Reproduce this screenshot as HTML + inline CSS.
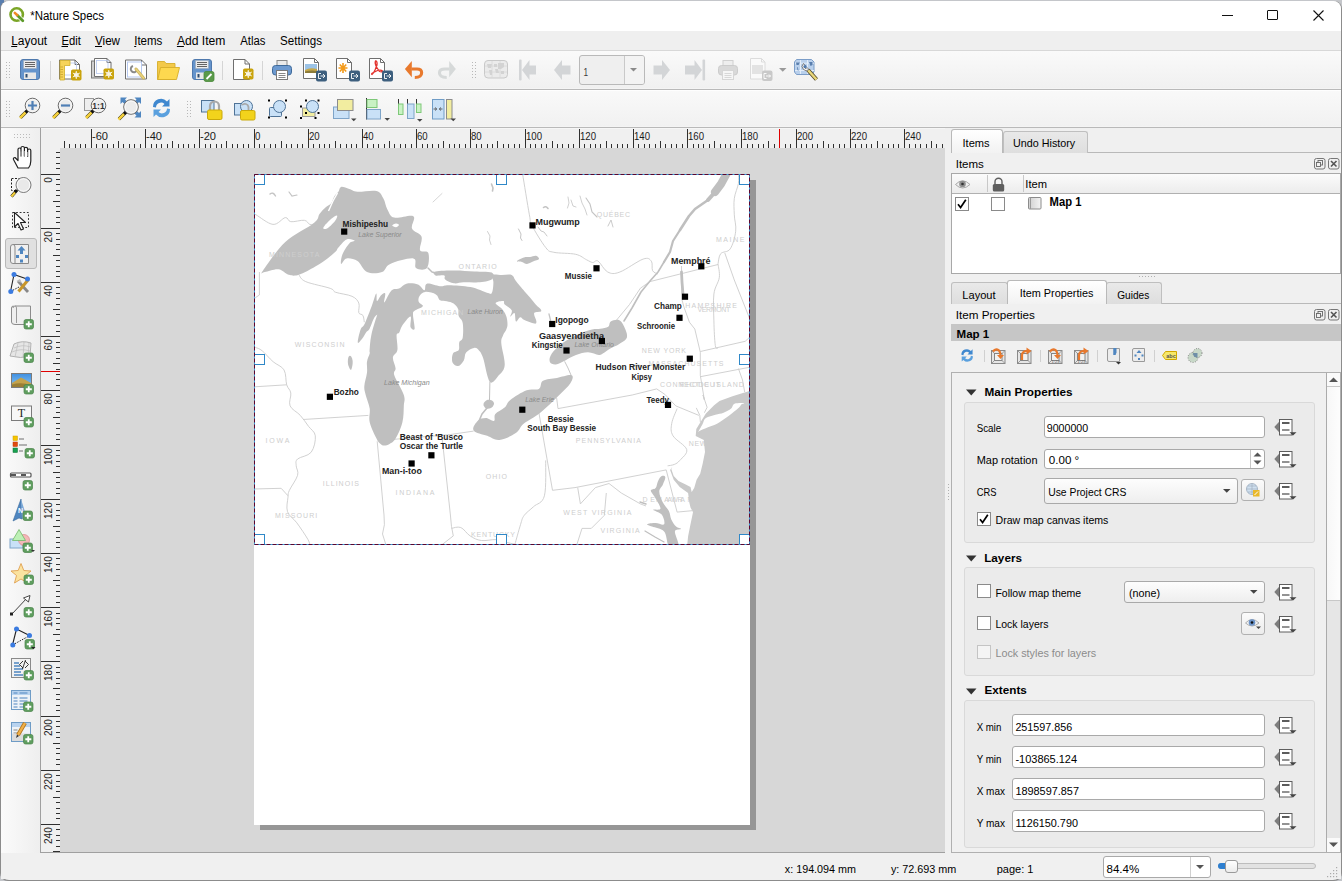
<!DOCTYPE html><html><head><meta charset='utf-8'><style>
*{box-sizing:border-box}
html,body{margin:0;padding:0}
body{width:1342px;height:881px;overflow:hidden;position:relative;font-family:"Liberation Sans",sans-serif;font-size:12px;color:#000;background:#7f8590}
.a{position:absolute}
.t{position:absolute;white-space:nowrap;line-height:1}
svg{position:absolute;overflow:visible}
u{text-decoration:underline;text-underline-offset:1px}
</style></head><body><div class="a" style="left:0px;top:0px;width:1342px;height:881px;background:#c4c6ca"></div><div class="a" style="left:0px;top:0px;width:4px;height:10px;background:#5a7fb0"></div><div class="a" style="left:0px;top:1px;width:1342px;height:880px;background:#8c8c8c;border-radius:8px"></div><div class="a" style="left:1px;top:1px;width:1340px;height:879px;background:#f0f0f0;border-radius:8px;overflow:hidden"></div><div class="a" style="left:1px;top:1px;width:1340px;height:30px;background:#fff;border-radius:8px 8px 0 0"></div><svg style="left:8px;top:6px" width="18" height="18" viewBox="0 0 18 18" ><circle cx="8.7" cy="8.5" r="6.2" fill="none" stroke="#7aa526" stroke-width="2.6"/><path d="M9.6 9.6 L14.8 14.8" stroke="#fff" stroke-width="4.2"/><path d="M9.3 9.3 L14.8 14.8" stroke="#5c9a2a" stroke-width="2.8" stroke-linecap="round"/><path d="M6.8 6.8 L9.2 9.2" stroke="#f08a24" stroke-width="2.6" stroke-linecap="round"/></svg><svg style="left:30px;top:4px" width="76" height="20"><text x="0.20" y="16.30" font-family="Liberation Sans" font-size="12" font-weight="400" fill="#000" textLength="73.8" lengthAdjust="spacingAndGlyphs" >*Nature Specs</text></svg><div class="a" style="left:1222px;top:15px;width:11px;height:1px;background:#111"></div><div class="a" style="left:1267px;top:10px;width:11px;height:10px;border:1px solid #111;border-radius:1px"></div><svg style="left:1313px;top:10px" width="11" height="11" viewBox="0 0 11 11" ><path d="M0.5 0.5 L10.5 10.5 M10.5 0.5 L0.5 10.5" stroke="#111" stroke-width="1.1"/></svg><div class="a" style="left:1px;top:31px;width:1340px;height:19px;background:#efefef"></div><div class="a" style="left:1px;top:50px;width:1340px;height:1px;background:#d8d8d8"></div><svg style="left:11px;top:29px" width="39" height="20"><text x="0.20" y="16.30" font-family="Liberation Sans" font-size="12" font-weight="400" fill="#000" textLength="36" lengthAdjust="spacingAndGlyphs" >Layout</text><rect x="0.1999999999999993" y="17" width="6" height="1" fill="#000"/></svg><svg style="left:61px;top:29px" width="22" height="20"><text x="0.50" y="16.30" font-family="Liberation Sans" font-size="12" font-weight="400" fill="#000" textLength="19.4" lengthAdjust="spacingAndGlyphs" >Edit</text><rect x="0.5" y="17" width="6.5" height="1" fill="#000"/></svg><svg style="left:95px;top:29px" width="27" height="20"><text x="0.00" y="16.30" font-family="Liberation Sans" font-size="12" font-weight="400" fill="#000" textLength="25" lengthAdjust="spacingAndGlyphs" >View</text><rect x="0" y="17" width="7" height="1" fill="#000"/></svg><svg style="left:134px;top:29px" width="31" height="20"><text x="0.20" y="16.30" font-family="Liberation Sans" font-size="12" font-weight="400" fill="#000" textLength="28.2" lengthAdjust="spacingAndGlyphs" >Items</text><rect x="0.19999999999998863" y="17" width="2" height="1" fill="#000"/></svg><svg style="left:176px;top:29px" width="52" height="20"><text x="0.90" y="16.30" font-family="Liberation Sans" font-size="12" font-weight="400" fill="#000" textLength="48.6" lengthAdjust="spacingAndGlyphs" >Add Item</text><rect x="0.9000000000000057" y="17" width="7" height="1" fill="#000"/></svg><svg style="left:240px;top:29px" width="28" height="20"><text x="0.30" y="16.30" font-family="Liberation Sans" font-size="12" font-weight="400" fill="#000" textLength="25.2" lengthAdjust="spacingAndGlyphs" >Atlas</text></svg><svg style="left:280px;top:29px" width="45" height="20"><text x="0.10" y="16.30" font-family="Liberation Sans" font-size="12" font-weight="400" fill="#000" textLength="41.9" lengthAdjust="spacingAndGlyphs" >Settings</text></svg><div class="a" style="left:1px;top:51px;width:1340px;height:38px;background:linear-gradient(#fafafa,#f0f0f0)"></div><div class="a" style="left:1px;top:88px;width:1340px;height:1px;background:#f4f4f4"></div><div class="a" style="left:1px;top:89px;width:1340px;height:1px;background:#b9b9b9"></div><div class="a" style="left:1px;top:90px;width:1340px;height:37px;background:linear-gradient(#f9f9f9,#f1f1f1)"></div><div class="a" style="left:1px;top:90px;width:1340px;height:1px;background:#fefefe"></div><div class="a" style="left:1px;top:126px;width:1340px;height:1px;background:#f4f4f4"></div><div class="a" style="left:1px;top:127px;width:1340px;height:1px;background:#b9b9b9"></div><svg style="left:6px;top:62px" width="4" height="16" viewBox="0 0 4 16" ><rect x="0" y="0" width="1" height="1" fill="#b8b8b8"/><rect x="3" y="0" width="1" height="1" fill="#b8b8b8"/><rect x="0" y="3" width="1" height="1" fill="#b8b8b8"/><rect x="3" y="3" width="1" height="1" fill="#b8b8b8"/><rect x="0" y="6" width="1" height="1" fill="#b8b8b8"/><rect x="3" y="6" width="1" height="1" fill="#b8b8b8"/><rect x="0" y="9" width="1" height="1" fill="#b8b8b8"/><rect x="3" y="9" width="1" height="1" fill="#b8b8b8"/><rect x="0" y="12" width="1" height="1" fill="#b8b8b8"/><rect x="3" y="12" width="1" height="1" fill="#b8b8b8"/><rect x="0" y="15" width="1" height="1" fill="#b8b8b8"/><rect x="3" y="15" width="1" height="1" fill="#b8b8b8"/></svg><svg style="left:472px;top:62px" width="4" height="16" viewBox="0 0 4 16" ><rect x="0" y="0" width="1" height="1" fill="#b8b8b8"/><rect x="3" y="0" width="1" height="1" fill="#b8b8b8"/><rect x="0" y="3" width="1" height="1" fill="#b8b8b8"/><rect x="3" y="3" width="1" height="1" fill="#b8b8b8"/><rect x="0" y="6" width="1" height="1" fill="#b8b8b8"/><rect x="3" y="6" width="1" height="1" fill="#b8b8b8"/><rect x="0" y="9" width="1" height="1" fill="#b8b8b8"/><rect x="3" y="9" width="1" height="1" fill="#b8b8b8"/><rect x="0" y="12" width="1" height="1" fill="#b8b8b8"/><rect x="3" y="12" width="1" height="1" fill="#b8b8b8"/><rect x="0" y="15" width="1" height="1" fill="#b8b8b8"/><rect x="3" y="15" width="1" height="1" fill="#b8b8b8"/></svg><svg style="left:6px;top:101px" width="4" height="16" viewBox="0 0 4 16" ><rect x="0" y="0" width="1" height="1" fill="#b8b8b8"/><rect x="3" y="0" width="1" height="1" fill="#b8b8b8"/><rect x="0" y="3" width="1" height="1" fill="#b8b8b8"/><rect x="3" y="3" width="1" height="1" fill="#b8b8b8"/><rect x="0" y="6" width="1" height="1" fill="#b8b8b8"/><rect x="3" y="6" width="1" height="1" fill="#b8b8b8"/><rect x="0" y="9" width="1" height="1" fill="#b8b8b8"/><rect x="3" y="9" width="1" height="1" fill="#b8b8b8"/><rect x="0" y="12" width="1" height="1" fill="#b8b8b8"/><rect x="3" y="12" width="1" height="1" fill="#b8b8b8"/><rect x="0" y="15" width="1" height="1" fill="#b8b8b8"/><rect x="3" y="15" width="1" height="1" fill="#b8b8b8"/></svg><svg style="left:187px;top:101px" width="4" height="16" viewBox="0 0 4 16" ><rect x="0" y="0" width="1" height="1" fill="#b8b8b8"/><rect x="3" y="0" width="1" height="1" fill="#b8b8b8"/><rect x="0" y="3" width="1" height="1" fill="#b8b8b8"/><rect x="3" y="3" width="1" height="1" fill="#b8b8b8"/><rect x="0" y="6" width="1" height="1" fill="#b8b8b8"/><rect x="3" y="6" width="1" height="1" fill="#b8b8b8"/><rect x="0" y="9" width="1" height="1" fill="#b8b8b8"/><rect x="3" y="9" width="1" height="1" fill="#b8b8b8"/><rect x="0" y="12" width="1" height="1" fill="#b8b8b8"/><rect x="3" y="12" width="1" height="1" fill="#b8b8b8"/><rect x="0" y="15" width="1" height="1" fill="#b8b8b8"/><rect x="3" y="15" width="1" height="1" fill="#b8b8b8"/></svg><div class="a" style="left:50px;top:61px;width:1px;height:19px;background:#d5d5d5"></div><div class="a" style="left:222px;top:61px;width:1px;height:19px;background:#d5d5d5"></div><div class="a" style="left:262px;top:61px;width:1px;height:19px;background:#d5d5d5"></div><svg style="left:20px;top:59px" width="23" height="23" viewBox="0 0 23 23" ><rect x="0.5" y="0.5" width="19" height="20" rx="2.5" fill="#6594cc" stroke="#4f79ad"/><rect x="3.5" y="1.5" width="13" height="8" fill="#ececec" stroke="#9aa9bb" stroke-width="0.6"/><path d="M5 3.5h10M5 5.5h10M5 7.5h10" stroke="#555" stroke-width="0.9"/><rect x="4" y="13.5" width="12" height="6.5" fill="#e8e8e8"/><rect x="5.5" y="15" width="2" height="3.5" fill="#2f4d70"/></svg><svg style="left:59px;top:59px" width="23" height="23" viewBox="0 0 23 23" ><path d="M0.5 1 H16.0 L20.5 5.5 V20 H0.5 Z" fill="#fff" stroke="#6f6f6f" stroke-width="1"/><path d="M16.0 1 V5.5 H20.5" fill="none" stroke="#6f6f6f" stroke-width="1"/><rect x="3.5" y="4" width="14" height="12" fill="none" stroke="#b7c9f0" stroke-width="0.8"/><path d="M1 1.5 H11 V6.5 H5.5 V21 H1 Z" fill="#f6d35a" stroke="#d0ae2a" stroke-width="0.8"/><path d="M1.5 8h2.5M1.5 10.5h2.5M1.5 13h2.5M1.5 15.5h2.5M1.5 18h2.5" stroke="#b58f1a" stroke-width="0.6"/><rect x="12" y="10.5" width="10.5" height="11" rx="1.8" fill="#c9a30c"/><g stroke="#fff" stroke-width="0.9" fill="none"><circle cx="17.25" cy="16.0" r="2"/><path d="M17.25 12.0v8M13.8 14.0l7 4M13.8 18.0l7 -4"/></g></svg><svg style="left:91px;top:58px" width="24" height="23" viewBox="0 0 24 23" ><rect x="0.5" y="3" width="16" height="17" fill="#d0d0d0" stroke="#7b7b7b"/><path d="M3.5 0.5 H16.0 L20.0 4.5 V18.5 H3.5 Z" fill="#fff" stroke="#6f6f6f" stroke-width="1"/><path d="M16.0 0.5 V4.5 H20.0" fill="none" stroke="#6f6f6f" stroke-width="1"/><rect x="5.5" y="2.5" width="11.5" height="13" fill="none" stroke="#b7c9f0" stroke-width="0.8"/><rect x="12.5" y="10.5" width="10.5" height="11" rx="1.8" fill="#c9a30c"/><g stroke="#fff" stroke-width="0.9" fill="none"><circle cx="17.75" cy="16.0" r="2"/><path d="M17.75 12.0v8M14.3 14.0l7 4M14.3 18.0l7 -4"/></g></svg><svg style="left:125px;top:59px" width="23" height="23" viewBox="0 0 23 23" ><path d="M0.5 1 H16.5 L21.5 6 V20 H0.5 Z" fill="#fff" stroke="#6f6f6f" stroke-width="1"/><path d="M16.5 1 V6 H21.5" fill="none" stroke="#6f6f6f" stroke-width="1"/><rect x="2.5" y="3" width="14" height="15" fill="none" stroke="#b7c9f0" stroke-width="1"/><path d="M8 7 a3.2 3.2 0 1 0 4 4" fill="none" stroke="#8a8a8a" stroke-width="2"/><path d="M11 10 L18.5 19" stroke="#c9b15a" stroke-width="3" stroke-linecap="round"/><path d="M11 10 L18.5 19" stroke="#e9d27a" stroke-width="1.6" stroke-linecap="round"/></svg><svg style="left:157px;top:60px" width="23" height="21" viewBox="0 0 23 21" ><path d="M0.5 19.5 V1.5 H7.5 L9 3.5 H18 V19.5 Z" fill="#f3c94a" stroke="#d6ae2a" stroke-width="0.9"/><path d="M0.8 19.5 L3.5 7.5 H22.5 L19.5 19.5 Z" fill="#fdd84f" stroke="#d6ae2a" stroke-width="0.9"/></svg><svg style="left:192px;top:59px" width="23" height="23" viewBox="0 0 23 23" ><rect x="0.5" y="0.5" width="19" height="20" rx="2.5" fill="#6594cc" stroke="#4f79ad"/><rect x="3.5" y="1.5" width="13" height="8" fill="#ececec" stroke="#9aa9bb" stroke-width="0.6"/><path d="M5 3.5h10M5 5.5h10M5 7.5h10" stroke="#555" stroke-width="0.9"/><rect x="4" y="13.5" width="12" height="6.5" fill="#e8e8e8"/><rect x="5.5" y="15" width="2" height="3.5" fill="#2f4d70"/><rect x="12" y="12.5" width="10" height="10" rx="2" fill="#5a9a4a" stroke="#4a8a3a" stroke-width="0.8"/><path d="M14.5 20 L19.5 15" stroke="#fff" stroke-width="1.8"/></svg><svg style="left:233px;top:59px" width="22" height="22" viewBox="0 0 22 22" ><path d="M0.5 0.5 H12.0 L16.5 5.0 V20.5 H0.5 Z" fill="#fff" stroke="#6f6f6f" stroke-width="1"/><path d="M12.0 0.5 V5.0 H16.5" fill="none" stroke="#6f6f6f" stroke-width="1"/><rect x="10" y="9.5" width="10.5" height="11" rx="1.8" fill="#c9a30c"/><g stroke="#fff" stroke-width="0.9" fill="none"><circle cx="15.25" cy="15.0" r="2"/><path d="M15.25 11.0v8M11.8 13.0l7 4M11.8 17.0l7 -4"/></g></svg><svg style="left:272px;top:60px" width="21" height="21" viewBox="0 0 21 21" ><rect x="5" y="0.5" width="10" height="6" fill="#eaeaea" stroke="#8a8a8a"/><rect x="0.5" y="5.5" width="19" height="9.5" rx="3" fill="#6d9ad0" stroke="#3f6a9a"/><rect x="4.5" y="10.5" width="11" height="9" fill="#fff" stroke="#7a7a7a"/><path d="M6.5 13.5h7M6.5 15.5h7M6.5 17.5h7" stroke="#6a6a6a" stroke-width="0.8"/></svg><svg style="left:303px;top:58px" width="24" height="23" viewBox="0 0 24 23" ><path d="M0.5 0.5 H11.5 L15.5 4.5 V20.5 H0.5 Z" fill="#fff" stroke="#6f6f6f" stroke-width="1"/><path d="M11.5 0.5 V4.5 H15.5" fill="none" stroke="#6f6f6f" stroke-width="1"/><rect x="2" y="6" width="12" height="9" fill="#9cc3e6"/><path d="M2 12 Q7 9 14 11 V15 H2Z" fill="#c8a94a"/><path d="M2 13.5 Q8 12 14 13 V15 H2Z" fill="#8c7c3a"/><rect x="13" y="12.5" width="11" height="11" rx="2" fill="#3d5f7e"/><path d="M15.5 15.5 v5 h2.5 M15.5 15.5 h2.5 M17.5 18.0 h4.5 M20 16.0 l2 2 l-2 2" stroke="#fff" stroke-width="0.9" fill="none"/></svg><svg style="left:336px;top:58px" width="24" height="23" viewBox="0 0 24 23" ><path d="M0.5 0.5 H11.5 L15.5 4.5 V20.5 H0.5 Z" fill="#fff" stroke="#6f6f6f" stroke-width="1"/><path d="M11.5 0.5 V4.5 H15.5" fill="none" stroke="#6f6f6f" stroke-width="1"/><g stroke="#f39a1a" stroke-width="1.6"><path d="M7 5v10M2.5 10h9M3.8 6.5l6.4 7M3.8 13.5l6.4-7"/></g><rect x="13" y="12.5" width="11" height="11" rx="2" fill="#3d5f7e"/><path d="M15.5 15.5 v5 h2.5 M15.5 15.5 h2.5 M17.5 18.0 h4.5 M20 16.0 l2 2 l-2 2" stroke="#fff" stroke-width="0.9" fill="none"/></svg><svg style="left:369px;top:58px" width="24" height="23" viewBox="0 0 24 23" ><path d="M0.5 0.5 H11.5 L15.5 4.5 V20.5 H0.5 Z" fill="#fff" stroke="#6f6f6f" stroke-width="1"/><path d="M11.5 0.5 V4.5 H15.5" fill="none" stroke="#6f6f6f" stroke-width="1"/><path d="M6.5 3 Q5.5 5 7.5 9 L10.5 13.5 Q13 14.5 13.5 13 Q12 11.5 8.5 12.5 L3.5 15 Q2 16 3 16.5 Q4.5 15.5 6 12 L8 7 Q8.5 3 6.5 3Z" fill="none" stroke="#e3342f" stroke-width="1.3"/><rect x="13" y="12.5" width="11" height="11" rx="2" fill="#3d5f7e"/><path d="M15.5 15.5 v5 h2.5 M15.5 15.5 h2.5 M17.5 18.0 h4.5 M20 16.0 l2 2 l-2 2" stroke="#fff" stroke-width="0.9" fill="none"/></svg><svg style="left:404px;top:60px" width="21" height="21" viewBox="0 0 21 21" ><path d="M0.9,9 L7.8,0.9 V17.2 Z" fill="#e8792d"/><path d="M7.5,7.4 H13 Q19.2,7.4 19.2,12.8 Q19.2,18.9 10.8,18.9 V16 Q16.1,16 16.1,12.8 Q16.1,10.6 13,10.6 H7.5 Z" fill="#e8792d"/></svg><svg style="left:437px;top:60px" width="21" height="21" viewBox="0 0 21 21" ><path d="M18.9,9 L12.2,0.9 V17.2 Z" fill="#d6d9d9"/><path d="M12.5,7.4 H8 Q0.9,7.4 0.9,12.8 Q0.9,18.9 9.7,18.9 V16 Q4,16 4,12.8 Q4,10.6 8,10.6 H12.5 Z" fill="#d6d9d9"/></svg><svg style="left:484px;top:60px" width="25" height="19" viewBox="0 0 25 19" ><rect x="0.5" y="0.5" width="23" height="17.5" rx="3.5" fill="#ebebeb" stroke="#c9c9c9"/><path d="M8 1v17M16 1v17M1 6h22M1 12h22" stroke="#d8d8d8" stroke-width="0.8"/><path d="M3 4 h5 l-1 4 h-3z M10 4 h3 v3 h-3z M14 3 h6 v4 l-3 2 h-3z M5 10 h3 v5 h-2z M11 9 h3 l1 4 h-3z M17 11 h3 v3 h-3z" fill="#d3d3d3"/></svg><svg style="left:519px;top:60px" width="18" height="21" viewBox="0 0 18 21" ><rect x="0" y="-0.5" width="2.6" height="21" rx="1" fill="#d3d5d7"/><path d="M3 10 L10.5 0 V20 Z" fill="#d3d5d7"/><rect x="10" y="5.5" width="7" height="9" fill="#d3d5d7"/></svg><svg style="left:554px;top:60px" width="17" height="21" viewBox="0 0 17 21" ><path d="M0 10 L8 0 V20 Z" fill="#d3d5d7"/><rect x="7.5" y="5.5" width="9" height="9" fill="#d3d5d7"/></svg><div class="a" style="left:579px;top:55px;width:66px;height:30px;border:1px solid #b9b9b9;border-radius:3px;background:#efefef"></div><div class="a" style="left:624px;top:56px;width:1px;height:28px;background:#c9c9c9"></div><div class="a" style="left:625px;top:56px;width:19px;height:28px;background:#f3f3f3;border-radius:0 2px 2px 0"></div><svg style="left:630px;top:68px" width="8" height="4" viewBox="0 0 8 4" ><path d="M0 0h7l-3.5 3.5z" fill="#8a8a8a"/></svg><svg style="left:583px;top:61px" width="8" height="19"><text x="0.60" y="14.50" font-family="Liberation Sans" font-size="11" font-weight="400" fill="#3a3a3a" textLength="4.6" lengthAdjust="spacingAndGlyphs" >1</text></svg><svg style="left:653px;top:60px" width="18" height="21" viewBox="0 0 18 21" ><path d="M17 10 L9 0 V20 Z" fill="#d3d5d7"/><rect x="0.5" y="5.5" width="9" height="9" fill="#d3d5d7"/></svg><svg style="left:685px;top:60px" width="21" height="21" viewBox="0 0 21 21" ><path d="M17 10 L9.5 0 V20 Z" fill="#d3d5d7"/><rect x="0" y="5.5" width="10" height="9" fill="#d3d5d7"/><rect x="17.5" y="-0.5" width="2.6" height="21" rx="1" fill="#d3d5d7"/></svg><svg style="left:718px;top:60px" width="21" height="21" viewBox="0 0 21 21" ><rect x="5" y="0.5" width="10" height="6" fill="#eeeeee" stroke="#d0d0d0"/><rect x="0.5" y="5.5" width="19" height="9.5" rx="3" fill="#d9d9d9" stroke="#cccccc"/><rect x="4.5" y="10.5" width="11" height="9" fill="#f6f6f6" stroke="#d6d6d6"/><path d="M6.5 13.5h7M6.5 15.5h7M6.5 17.5h7" stroke="#d0d0d0" stroke-width="0.8"/></svg><svg style="left:750px;top:58px" width="24" height="24" viewBox="0 0 24 24" ><path d="M0.5 0.5 H11.5 L15.0 4.0 V21.0 H0.5 Z" fill="#fafafa" stroke="#dcdcdc" stroke-width="1"/><path d="M11.5 0.5 V4.0 H15.0" fill="none" stroke="#dcdcdc" stroke-width="1"/><rect x="2" y="7" width="11" height="9" fill="#e3e3e3"/><rect x="12" y="12.5" width="10.5" height="10.5" rx="2" fill="#c9c9c9"/><path d="M14 15.5v5h2.5M14 15.5h2.5M16 18h4.5M19 16.5l1.5 1.5-1.5 1.5" stroke="#fff" stroke-width="0.9" fill="none"/></svg><svg style="left:779px;top:68px" width="8" height="4" viewBox="0 0 8 4" ><path d="M0 0h7.5l-3.75 3.8z" fill="#9a9a9a"/></svg><svg style="left:794px;top:59px" width="24" height="23" viewBox="0 0 24 23" ><path d="M2.5 0.5 H17.5 L20 3 V13 L17.5 15.5 H2.5 L0.5 13 V3 Z" fill="#b9d0ec" stroke="#7b9dc8"/><path d="M6.5 1v14M13.5 1v14M1 4.2h19M1 11.5h19" stroke="#e8f0fa" stroke-width="0.9"/><path d="M2 3.5 h4 l-1.5 2.5 h-2z M3.5 8 q1 2 1 4 q-1.5 -1 -1.5 -4z M15 3 h3.5 v3 l-2 1z" fill="#5a7fae"/><path d="M14 11 L22.5 20.5" stroke="#4a4020" stroke-width="4"/><path d="M14 11 L22.5 20.5" stroke="#e9d77a" stroke-width="2.6"/><path d="M9.5 4.5 A4 4 0 1 0 15 10.5 L13 8.5 L11.8 9.8 L10 8 L11.3 6.7 Z" fill="#f2f2f2" stroke="#555" stroke-width="0.7"/><circle cx="11" cy="7.5" r="1.6" fill="#4f79ad"/></svg><svg style="left:18px;top:97px" width="24" height="24" viewBox="0 0 24 24" ><path d="M10.0 13.0 L2.5 20.5" stroke="#111" stroke-width="3.2"/><path d="M7.5 15.5 L2.0 21.0" stroke="#f3cf3a" stroke-width="2.6"/><circle cx="14.5" cy="8.5" r="7.3" fill="#ececec" stroke="#6a6a6a" stroke-width="1"/><circle cx="14.5" cy="8.5" r="6" fill="none" stroke="#fafafa" stroke-width="1"/><path d="M14.5 4v9M10 8.5h9" stroke="#4f7fb5" stroke-width="2.2"/></svg><svg style="left:51px;top:97px" width="24" height="24" viewBox="0 0 24 24" ><path d="M10.0 13.0 L2.5 20.5" stroke="#111" stroke-width="3.2"/><path d="M7.5 15.5 L2.0 21.0" stroke="#f3cf3a" stroke-width="2.6"/><circle cx="14.5" cy="8.5" r="7.3" fill="#ececec" stroke="#6a6a6a" stroke-width="1"/><circle cx="14.5" cy="8.5" r="6" fill="none" stroke="#fafafa" stroke-width="1"/><path d="M10 8.5h9" stroke="#4f7fb5" stroke-width="2.2"/></svg><svg style="left:84px;top:97px" width="24" height="24" viewBox="0 0 24 24" ><rect x="0.5" y="1.5" width="9" height="12" fill="#eee" stroke="#999"/><path d="M10.0 13.0 L2.5 20.5" stroke="#111" stroke-width="3.2"/><path d="M7.5 15.5 L2.0 21.0" stroke="#f3cf3a" stroke-width="2.6"/><circle cx="14.5" cy="8.5" r="7.3" fill="#ececec" stroke="#6a6a6a" stroke-width="1"/><circle cx="14.5" cy="8.5" r="6" fill="none" stroke="#fafafa" stroke-width="1"/><text x="14.5" y="11.5" font-family="Liberation Sans" font-weight="bold" font-size="8.5" text-anchor="middle" fill="#333">1:1</text></svg><svg style="left:117px;top:97px" width="25" height="24" viewBox="0 0 25 24" ><g fill="#4f86c0"><path d="M3.5 0.5h6.5l-2 2 3 3-2.5 2.5-3-3-2 2z"/><path d="M24 0.5v6.5l-2-2-3 3-2.5-2.5 3-3-2-2z"/><path d="M24 20.5h-6.5l2-2-3-3 2.5-2.5 3 3 2-2z"/></g><path d="M9.5 14.5 L2 22" stroke="#111" stroke-width="3.2"/><path d="M7 17 L1.5 22.5" stroke="#f3cf3a" stroke-width="2.6"/><circle cx="14" cy="10" r="7.3" fill="#ececec" stroke="#6a6a6a" stroke-width="1"/><circle cx="14" cy="10" r="6" fill="none" stroke="#fafafa" stroke-width="1"/></svg><svg style="left:151px;top:97px" width="23" height="24" viewBox="0 0 23 24" ><g transform="scale(1.0)"><path d="M2 10 A8 8 0 0 1 16 4.5 L18.5 2 V9.5 H11 L13.5 7 A5 5 0 0 0 5 10.5 Z" fill="#3f88cf"/><path d="M19 12 A8 8 0 0 1 5 17.5 L2.5 20 V12.5 H10 L7.5 15 A5 5 0 0 0 16 11.5 Z" fill="#5aa0de"/></g></svg><svg style="left:201px;top:100px" width="22" height="21" viewBox="0 0 22 21" ><rect x="0.5" y="0.5" width="12.5" height="11.5" fill="#c9e1f7" stroke="#4f7397"/><path d="M9 10 V6 A4.5 4.5 0 0 1 18 6 V10" fill="none" stroke="#a8a8a8" stroke-width="2.2"/><rect x="6.5" y="10" width="14.5" height="9.5" rx="1.5" fill="#f2d31c" stroke="#caa90a"/></svg><svg style="left:234px;top:100px" width="22" height="21" viewBox="0 0 22 21" ><rect x="0.5" y="3.5" width="7.5" height="11.5" fill="#c9e1f7" stroke="#4f7397"/><circle cx="12.5" cy="6.5" r="6" fill="#c9e1f7" stroke="#4f7397"/><path d="M14.5 11 V7 A3.8 3.8 0 0 0 8 5" fill="none" stroke="#a8a8a8" stroke-width="1.8"/><rect x="6.5" y="10.5" width="14.5" height="9.5" rx="1.5" fill="#f2d31c" stroke="#caa90a"/></svg><svg style="left:268px;top:100px" width="20" height="20" viewBox="0 0 20 20" ><rect x="1.5" y="7.5" width="12" height="9" rx="1" fill="#c9e1f7" stroke="#4f7397"/><circle cx="11.5" cy="6.5" r="6" fill="#c9e1f7" stroke="#4f7397"/><g fill="#000"><rect x="0" y="-0.5" width="2" height="2"/><rect x="17" y="-0.5" width="2" height="2"/><rect x="0" y="16.5" width="2" height="2"/><rect x="17" y="16.5" width="2" height="2"/></g></svg><svg style="left:300px;top:100px" width="20" height="20" viewBox="0 0 20 20" ><rect x="2.5" y="8" width="12.5" height="8.5" fill="#f2eda0" stroke="#999"/><circle cx="12.5" cy="6.5" r="6" fill="#c9e1f7" stroke="#4f7397"/><g fill="#000"><rect x="5" y="-0.5" width="2" height="2"/><rect x="17.5" y="-0.5" width="2" height="2"/><rect x="0" y="5.5" width="2" height="2"/><rect x="5" y="12" width="2" height="2"/><rect x="17.5" y="12" width="2" height="2"/><rect x="0" y="17" width="2" height="2"/><rect x="14.5" y="17" width="2" height="2"/></g></svg><svg style="left:333px;top:99px" width="24" height="23" viewBox="0 0 24 23" ><rect x="0.5" y="8" width="15.5" height="11.5" fill="#c9e1f7" stroke="#7ea4c8"/><rect x="4.5" y="0.5" width="15.5" height="11" fill="#f2eda0" stroke="#8c8c8c"/><path d="M18 19.5 h5.5 l-2.75 2.8z" fill="#444"/></svg><svg style="left:366px;top:98px" width="25" height="23" viewBox="0 0 25 23" ><path d="M0.5 0 V21.5" stroke="#333" stroke-width="1"/><rect x="1" y="1.5" width="10" height="8" fill="#c9f2c4" stroke="#7ec879"/><rect x="1" y="11.5" width="13.5" height="9.5" fill="#c9e1f7" stroke="#7ea4c8"/><path d="M18.5 20 h5.5 l-2.75 2.8z" fill="#444"/></svg><svg style="left:398px;top:99px" width="25" height="23" viewBox="0 0 25 23" ><path d="M0.5 0 V8 M9.5 0 V8 M18.5 0 V8" stroke="#333" stroke-width="1"/><rect x="0.5" y="5" width="4.5" height="10.5" fill="#c9f2c4" stroke="#7ec879"/><rect x="9.5" y="5" width="6.5" height="14.5" fill="#c9e1f7" stroke="#7ea4c8"/><rect x="18.5" y="5" width="4.5" height="8.5" fill="#c9f2c4" stroke="#7ec879"/><path d="M19 20 h5.5 l-2.75 2.8z" fill="#444"/></svg><svg style="left:432px;top:99px" width="25" height="23" viewBox="0 0 25 23" ><rect x="0.5" y="0.5" width="11.5" height="19.5" fill="#c9e1f7" stroke="#6f9cc6"/><path d="M1.5 10h3M10.5 10h-3M3 8.5l1.8 1.5-1.8 1.5M9 8.5l-1.8 1.5 1.8 1.5" stroke="#555" stroke-width="0.9" fill="none"/><rect x="14.5" y="0.5" width="5.5" height="19.5" fill="#f2eda0" stroke="#8c8c8c"/><path d="M18.5 19.5 h5.5 l-2.75 2.8z" fill="#444"/></svg><div class="a" style="left:1px;top:128px;width:39px;height:725px;background:linear-gradient(90deg,#fbfbfb,#eeeeee)"></div><div class="a" style="left:40px;top:128px;width:1px;height:725px;background:#a0a0a0"></div><svg style="left:14px;top:134px" width="18" height="4" viewBox="0 0 18 4" ><rect x="0" y="0" width="1" height="1" fill="#bbb"/><rect x="0" y="3" width="1" height="1" fill="#bbb"/><rect x="3" y="0" width="1" height="1" fill="#bbb"/><rect x="3" y="3" width="1" height="1" fill="#bbb"/><rect x="6" y="0" width="1" height="1" fill="#bbb"/><rect x="6" y="3" width="1" height="1" fill="#bbb"/><rect x="9" y="0" width="1" height="1" fill="#bbb"/><rect x="9" y="3" width="1" height="1" fill="#bbb"/><rect x="12" y="0" width="1" height="1" fill="#bbb"/><rect x="12" y="3" width="1" height="1" fill="#bbb"/><rect x="15" y="0" width="1" height="1" fill="#bbb"/><rect x="15" y="3" width="1" height="1" fill="#bbb"/></svg><svg style="left:12px;top:146px" width="26" height="26" viewBox="0 0 26 26" ><path d="M6 22 L1.5 13.5 Q1 11.5 3 11.5 L6 14.5 V3.5 Q6 2 7.5 2 Q9 2 9 3.5 V10 V2 Q9 0.5 10.7 0.5 Q12.4 0.5 12.4 2 V10 V2.8 Q12.4 1.3 14 1.3 Q15.6 1.3 15.6 2.8 V10.5 V4.5 Q15.6 3 17.2 3 Q18.8 3 18.8 4.5 V15 Q18.8 19 16.5 22 Z" fill="#fff" stroke="#222" stroke-width="1.2" stroke-linejoin="round"/><path d="M9 5.5v5M12.4 5v5.5M15.6 6v4.5" stroke="#bbb" stroke-width="0.8"/></svg><svg style="left:10px;top:176px" width="26" height="26" viewBox="0 0 26 26" ><rect x="1.5" y="2.5" width="12" height="12" fill="none" stroke="#222" stroke-dasharray="2 1.5"/><path d="M7 14 L1.5 20.5" stroke="#111" stroke-width="3"/><path d="M5 16.5 L1.5 20.5" stroke="#f3cf3a" stroke-width="2.2"/><circle cx="13.5" cy="9" r="7.5" fill="#e9e9e9" stroke="#777"/><circle cx="13.5" cy="9" r="6.2" fill="none" stroke="#fafafa"/></svg><svg style="left:11px;top:210px" width="26" height="26" viewBox="0 0 26 26" ><rect x="1.5" y="2.5" width="16" height="15" fill="none" stroke="#333" stroke-dasharray="1.8 1.8"/><path d="M3.5 2.5 V17 L7 13.5 L10 20 L12.5 19 L9.5 12.5 H14.5 Z" fill="#fff" stroke="#222" stroke-width="1.1" stroke-linejoin="round"/></svg><div class="a" style="left:5px;top:238px;width:32px;height:31px;background:#e0e0e0;border:1px solid #b9b9b9;border-radius:3px"></div><svg style="left:8px;top:244px" width="26" height="26" viewBox="0 0 26 26" ><path d="M2.5 3 Q2.5 0.5 5 0.5 H20.5 V19.5 H5 Q2.5 19.5 2.5 17Z" fill="#f0f0f0" stroke="#8a8a8a"/><path d="M5 0.5 Q7 0.5 7 3 V19" fill="none" stroke="#8a8a8a"/><g fill="#4f86c0"><path d="M13.5 2 L9.5 6.5 H12 V10 H15 V6.5 H17.5Z"/><rect x="8" y="11" width="3" height="3"/><rect x="17" y="11" width="3" height="3"/><rect x="12" y="15.5" width="3" height="3"/></g></svg><svg style="left:9px;top:272px" width="26" height="26" viewBox="0 0 26 26" ><path d="M5 2.5 L1.5 19.5 M5 2.5 L18 7 " stroke="#222" stroke-width="1.1"/><path d="M1.5 19.5 L10 15" stroke="#222" stroke-dasharray="1.5 1.2"/><path d="M9 9 L19 20" stroke="#888" stroke-width="2.8"/><path d="M19 8 L9.5 19.5" stroke="#c8962a" stroke-width="3"/><path d="M7.5 9 L11 7 L13 11z" fill="#bbb"/><circle cx="5" cy="2.5" r="2.5" fill="#3b7be0"/><circle cx="1.8" cy="19.5" r="2.5" fill="#3b7be0"/><circle cx="18.5" cy="7" r="2.5" fill="#3b7be0"/></svg><svg style="left:9px;top:305px" width="26" height="26" viewBox="0 0 26 26" ><path d="M4 3 Q4 1 6 1 H21.5 V19.5 H6 Q2.5 19.5 2.5 17 V3 Q2.5 1 4.5 1" fill="#efefef" stroke="#8c8c8c"/><path d="M6 1 Q7.5 1 7.5 3 V18" fill="none" stroke="#9a9a9a"/><rect x="15" y="14.5" width="9.5" height="9.5" rx="2" fill="#5f9e5f" stroke="#4a844a" stroke-width="0.7"/><path d="M19.75 16.3v6M16.8 19.25h6" stroke="#fff" stroke-width="1.8"/></svg><svg style="left:9px;top:339px" width="26" height="26" viewBox="0 0 26 26" ><path d="M5 5 Q13 1 22 4 L21 17 Q12 20 1 17 Z" fill="#e6e6e6" stroke="#aaa" stroke-width="0.9"/><path d="M3 13 Q12 9 21 12 M5 9 Q13 5 21.5 8 M9 4 L6 18 M15 3 L14 19 M20 4 L19 18" fill="none" stroke="#bdbdbd" stroke-width="0.7"/><rect x="15" y="14" width="9.5" height="9.5" rx="2" fill="#5f9e5f" stroke="#4a844a" stroke-width="0.7"/><path d="M19.75 15.8v6M16.8 18.75h6" stroke="#fff" stroke-width="1.8"/></svg><svg style="left:9px;top:371px" width="26" height="26" viewBox="0 0 26 26" ><defs><linearGradient id="sky" x1="0" y1="0" x2="0" y2="1"><stop offset="0" stop-color="#3f8fe0"/><stop offset="1" stop-color="#8cc6f3"/></linearGradient></defs><rect x="2.5" y="2.5" width="20" height="14" fill="url(#sky)" stroke="#7b7b7b"/><path d="M3 12 L12 6.5 L22 12 V16 H3Z" fill="#c3a24c"/><path d="M3 16 V13.5 Q12 11 22 14 V16Z" fill="#9a7e34"/><rect x="15" y="13.5" width="9.5" height="9.5" rx="2" fill="#5f9e5f" stroke="#4a844a" stroke-width="0.7"/><path d="M19.75 15.3v6M16.8 18.25h6" stroke="#fff" stroke-width="1.8"/></svg><svg style="left:9px;top:403px" width="26" height="26" viewBox="0 0 26 26" ><rect x="2.5" y="3" width="20" height="14.5" fill="#f7f7f7" stroke="#7b7b7b"/><text x="12.5" y="14" font-family="Liberation Serif" font-size="12" text-anchor="middle" fill="#222">T</text><rect x="15" y="14.5" width="9.5" height="9.5" rx="2" fill="#5f9e5f" stroke="#4a844a" stroke-width="0.7"/><path d="M19.75 16.3v6M16.8 19.25h6" stroke="#fff" stroke-width="1.8"/></svg><svg style="left:10px;top:435px" width="26" height="26" viewBox="0 0 26 26" ><rect x="3" y="1" width="4.5" height="4.5" fill="#f5c400" stroke="#d0a000" stroke-width="0.5"/><rect x="3" y="7" width="4.5" height="4.5" fill="#e04a10" stroke="#b83a00" stroke-width="0.5"/><rect x="3" y="13" width="4.5" height="4.5" fill="#18a050" stroke="#0a7030" stroke-width="0.5"/><path d="M9 4h5M9 10h8M9 16h4" stroke="#9a9a9a" stroke-width="1.4"/><rect x="15" y="13.5" width="9.5" height="9.5" rx="2" fill="#5f9e5f" stroke="#4a844a" stroke-width="0.7"/><path d="M19.75 15.3v6M16.8 18.25h6" stroke="#fff" stroke-width="1.8"/></svg><svg style="left:8px;top:469px" width="26" height="26" viewBox="0 0 26 26" ><rect x="2.5" y="4" width="20.5" height="4" rx="1" fill="#fff" stroke="#555" stroke-width="1.2"/><path d="M3 6h5M13 6h5" stroke="#555" stroke-width="2.2"/><rect x="15" y="11.5" width="9.5" height="9.5" rx="2" fill="#5f9e5f" stroke="#4a844a" stroke-width="0.7"/><path d="M19.75 13.3v6M16.8 16.25h6" stroke="#fff" stroke-width="1.8"/></svg><svg style="left:10px;top:498px" width="26" height="26" viewBox="0 0 26 26" ><path d="M11 1 L3 23 L9 20 L12 21 Z" fill="#4f86c0" stroke="#3a6a9a" stroke-width="0.6"/><path d="M11 1 L17 20 L12 21Z" fill="#7aa8d8"/><text x="10.5" y="15" font-family="Liberation Sans" font-size="7" font-weight="bold" fill="#fff" text-anchor="middle">N</text><rect x="13" y="13" width="9.5" height="9.5" rx="2" fill="#5f9e5f" stroke="#4a844a" stroke-width="0.7"/><path d="M17.75 14.8v6M14.8 17.75h6" stroke="#fff" stroke-width="1.8"/></svg><svg style="left:8px;top:529px" width="26" height="26" viewBox="0 0 26 26" ><rect x="2" y="10" width="13" height="9" fill="#c9e1f7" stroke="#7ea4c8"/><circle cx="16" cy="11" r="5.5" fill="#f4b8b8" stroke="#d98a8a" stroke-width="0.7"/><path d="M11 0.5 L4.5 11.5 H17.5Z" fill="#bdf0b5" stroke="#72b86a" stroke-width="0.8"/><rect x="15" y="14" width="9.5" height="9.5" rx="2" fill="#5f9e5f" stroke="#4a844a" stroke-width="0.7"/><path d="M19.75 15.8v6M16.8 18.75h6" stroke="#fff" stroke-width="1.8"/><path d="M23 21h4l-2 2z" fill="#333"/></svg><svg style="left:9px;top:562px" width="26" height="26" viewBox="0 0 26 26" ><path d="M12 1.5 L14.8 8.5 L22 9 L16.5 13.5 L18.5 21 L12 17 L5.5 21 L7.5 13.5 L2 9 L9.2 8.5Z" fill="#fbe3a0" stroke="#e0a050" stroke-width="0.9" stroke-linejoin="round"/><rect x="15" y="13" width="9.5" height="9.5" rx="2" fill="#5f9e5f" stroke="#4a844a" stroke-width="0.7"/><path d="M19.75 14.8v6M16.8 17.75h6" stroke="#fff" stroke-width="1.8"/></svg><svg style="left:9px;top:594px" width="26" height="26" viewBox="0 0 26 26" ><path d="M3 20 L18 4" stroke="#444" stroke-width="1"/><path d="M21 1.5 L19.5 8 L14.5 4 Z" fill="#fff" stroke="#333" stroke-width="0.9"/><rect x="1" y="18.5" width="3" height="3" fill="#222"/><rect x="15" y="13.5" width="9.5" height="9.5" rx="2" fill="#5f9e5f" stroke="#4a844a" stroke-width="0.7"/><path d="M19.75 15.3v6M16.8 18.25h6" stroke="#fff" stroke-width="1.8"/></svg><svg style="left:11px;top:626px" width="26" height="26" viewBox="0 0 26 26" ><path d="M5.5 3 L1.5 19 M5.5 3 L18.5 9.5" stroke="#222" stroke-width="1.1"/><path d="M1.5 19 L18 10" stroke="#222" stroke-dasharray="1.5 1.2"/><circle cx="5.5" cy="3" r="2.5" fill="#3b7be0"/><circle cx="1.8" cy="19" r="2.5" fill="#3b7be0"/><circle cx="18.5" cy="9.5" r="2.5" fill="#3b7be0"/><rect x="14" y="13.5" width="9.5" height="9.5" rx="2" fill="#5f9e5f" stroke="#4a844a" stroke-width="0.7"/><path d="M18.75 15.3v6M15.8 18.25h6" stroke="#fff" stroke-width="1.8"/><path d="M20 21h4.5l-2.25 2.3z" fill="#222"/></svg><svg style="left:10px;top:657px" width="26" height="26" viewBox="0 0 26 26" ><rect x="1.5" y="1.5" width="19" height="19" fill="#f2f2f2" stroke="#8a8a8a"/><path d="M4 6h5M4 9h6M4 12h9M4 15h7M4 18h9" stroke="#4f86c0" stroke-width="1.4"/><path d="M13 4 L9.5 7.5 L13 11 M15 4 L18.5 7.5 L15 11 M15.5 3 L12.5 12" fill="none" stroke="#222" stroke-width="0.9"/><rect x="14" y="13.5" width="9.5" height="9.5" rx="2" fill="#5f9e5f" stroke="#4a844a" stroke-width="0.7"/><path d="M18.75 15.3v6M15.8 18.25h6" stroke="#fff" stroke-width="1.8"/></svg><svg style="left:10px;top:689px" width="26" height="26" viewBox="0 0 26 26" ><rect x="1.5" y="1.5" width="19" height="19" fill="#eef3f8" stroke="#6f9cc6"/><rect x="2" y="2" width="18" height="4" fill="#b8d3ef"/><path d="M3.5 4h4M9.5 4h8M3.5 9h4M9.5 9h8M3.5 12h4M9.5 12h8M3.5 15h4M9.5 15h8M3.5 18h4M9.5 18h8" stroke="#4f86c0" stroke-width="1.2"/><rect x="13.5" y="13" width="9.5" height="9.5" rx="2" fill="#5f9e5f" stroke="#4a844a" stroke-width="0.7"/><path d="M18.25 14.8v6M15.3 17.75h6" stroke="#fff" stroke-width="1.8"/></svg><svg style="left:10px;top:721px" width="26" height="26" viewBox="0 0 26 26" ><rect x="1.5" y="1.5" width="19" height="19" fill="#eef3f8" stroke="#6f9cc6"/><rect x="2" y="2" width="18" height="4" fill="#b8d3ef"/><path d="M3.5 9h4M3.5 12h5M3.5 15h4" stroke="#888" stroke-width="1"/><rect x="2" y="12.5" width="18" height="7.5" fill="#dcdcdc"/><path d="M15 2 L8 14" stroke="#b2741a" stroke-width="4"/><path d="M15 2 L8 14" stroke="#f0b04a" stroke-width="2.4"/><path d="M7 13.5 L6 17 L9 15z" fill="#333"/><rect x="13.5" y="13.5" width="9.5" height="9.5" rx="2" fill="#5f9e5f" stroke="#4a844a" stroke-width="0.7"/><path d="M18.25 15.3v6M15.3 18.25h6" stroke="#fff" stroke-width="1.8"/></svg><div class="a" style="left:41px;top:128px;width:904px;height:20px;background:#f0f0f0"></div><div class="a" style="left:41px;top:128px;width:904px;height:1px;background:#f6f6f6"></div><div class="a" style="left:41px;top:148px;width:19px;height:705px;background:#f0f0f0"></div><svg style="left:0px;top:128px" width="945" height="20" viewBox="0 0 945 20" ><path d="M64.5 13V20" stroke="#303030"/><path d="M69.5 16V20" stroke="#303030"/><path d="M75.5 16V20" stroke="#303030"/><path d="M80.5 16V20" stroke="#303030"/><path d="M85.5 16V20" stroke="#303030"/><path d="M91.5 1V20" stroke="#303030"/><text x="92" y="12" font-family="Liberation Sans" font-size="11" fill="#1a1a1a" textLength="16.049999999999997" lengthAdjust="spacingAndGlyphs">-60</text><path d="M96.5 16V20" stroke="#303030"/><path d="M102.5 16V20" stroke="#303030"/><path d="M107.5 16V20" stroke="#303030"/><path d="M113.5 16V20" stroke="#303030"/><path d="M118.5 13V20" stroke="#303030"/><path d="M123.5 16V20" stroke="#303030"/><path d="M129.5 16V20" stroke="#303030"/><path d="M134.5 16V20" stroke="#303030"/><path d="M140.5 16V20" stroke="#303030"/><path d="M145.5 1V20" stroke="#303030"/><text x="146" y="12" font-family="Liberation Sans" font-size="11" fill="#1a1a1a" textLength="16.049999999999997" lengthAdjust="spacingAndGlyphs">-40</text><path d="M151.5 16V20" stroke="#303030"/><path d="M156.5 16V20" stroke="#303030"/><path d="M161.5 16V20" stroke="#303030"/><path d="M167.5 16V20" stroke="#303030"/><path d="M172.5 13V20" stroke="#303030"/><path d="M178.5 16V20" stroke="#303030"/><path d="M183.5 16V20" stroke="#303030"/><path d="M188.5 16V20" stroke="#303030"/><path d="M194.5 16V20" stroke="#303030"/><path d="M199.5 1V20" stroke="#303030"/><text x="200" y="12" font-family="Liberation Sans" font-size="11" fill="#1a1a1a" textLength="16.049999999999997" lengthAdjust="spacingAndGlyphs">-20</text><path d="M205.5 16V20" stroke="#303030"/><path d="M210.5 16V20" stroke="#303030"/><path d="M216.5 16V20" stroke="#303030"/><path d="M221.5 16V20" stroke="#303030"/><path d="M226.5 13V20" stroke="#303030"/><path d="M232.5 16V20" stroke="#303030"/><path d="M237.5 16V20" stroke="#303030"/><path d="M243.5 16V20" stroke="#303030"/><path d="M248.5 16V20" stroke="#303030"/><path d="M254.5 1V20" stroke="#303030"/><text x="255" y="12" font-family="Liberation Sans" font-size="11" fill="#1a1a1a" textLength="5.35" lengthAdjust="spacingAndGlyphs">0</text><path d="M259.5 16V20" stroke="#303030"/><path d="M264.5 16V20" stroke="#303030"/><path d="M270.5 16V20" stroke="#303030"/><path d="M275.5 16V20" stroke="#303030"/><path d="M281.5 13V20" stroke="#303030"/><path d="M286.5 16V20" stroke="#303030"/><path d="M291.5 16V20" stroke="#303030"/><path d="M297.5 16V20" stroke="#303030"/><path d="M302.5 16V20" stroke="#303030"/><path d="M308.5 1V20" stroke="#303030"/><text x="309" y="12" font-family="Liberation Sans" font-size="11" fill="#1a1a1a" textLength="10.7" lengthAdjust="spacingAndGlyphs">20</text><path d="M313.5 16V20" stroke="#303030"/><path d="M319.5 16V20" stroke="#303030"/><path d="M324.5 16V20" stroke="#303030"/><path d="M329.5 16V20" stroke="#303030"/><path d="M335.5 13V20" stroke="#303030"/><path d="M340.5 16V20" stroke="#303030"/><path d="M346.5 16V20" stroke="#303030"/><path d="M351.5 16V20" stroke="#303030"/><path d="M356.5 16V20" stroke="#303030"/><path d="M362.5 1V20" stroke="#303030"/><text x="363" y="12" font-family="Liberation Sans" font-size="11" fill="#1a1a1a" textLength="10.7" lengthAdjust="spacingAndGlyphs">40</text><path d="M367.5 16V20" stroke="#303030"/><path d="M373.5 16V20" stroke="#303030"/><path d="M378.5 16V20" stroke="#303030"/><path d="M384.5 16V20" stroke="#303030"/><path d="M389.5 13V20" stroke="#303030"/><path d="M394.5 16V20" stroke="#303030"/><path d="M400.5 16V20" stroke="#303030"/><path d="M405.5 16V20" stroke="#303030"/><path d="M411.5 16V20" stroke="#303030"/><path d="M416.5 1V20" stroke="#303030"/><text x="417" y="12" font-family="Liberation Sans" font-size="11" fill="#1a1a1a" textLength="10.7" lengthAdjust="spacingAndGlyphs">60</text><path d="M422.5 16V20" stroke="#303030"/><path d="M427.5 16V20" stroke="#303030"/><path d="M432.5 16V20" stroke="#303030"/><path d="M438.5 16V20" stroke="#303030"/><path d="M443.5 13V20" stroke="#303030"/><path d="M449.5 16V20" stroke="#303030"/><path d="M454.5 16V20" stroke="#303030"/><path d="M459.5 16V20" stroke="#303030"/><path d="M465.5 16V20" stroke="#303030"/><path d="M470.5 1V20" stroke="#303030"/><text x="471" y="12" font-family="Liberation Sans" font-size="11" fill="#1a1a1a" textLength="10.7" lengthAdjust="spacingAndGlyphs">80</text><path d="M476.5 16V20" stroke="#303030"/><path d="M481.5 16V20" stroke="#303030"/><path d="M487.5 16V20" stroke="#303030"/><path d="M492.5 16V20" stroke="#303030"/><path d="M497.5 13V20" stroke="#303030"/><path d="M503.5 16V20" stroke="#303030"/><path d="M508.5 16V20" stroke="#303030"/><path d="M514.5 16V20" stroke="#303030"/><path d="M519.5 16V20" stroke="#303030"/><path d="M525.5 1V20" stroke="#303030"/><text x="526" y="12" font-family="Liberation Sans" font-size="11" fill="#1a1a1a" textLength="16.049999999999997" lengthAdjust="spacingAndGlyphs">100</text><path d="M530.5 16V20" stroke="#303030"/><path d="M535.5 16V20" stroke="#303030"/><path d="M541.5 16V20" stroke="#303030"/><path d="M546.5 16V20" stroke="#303030"/><path d="M552.5 13V20" stroke="#303030"/><path d="M557.5 16V20" stroke="#303030"/><path d="M562.5 16V20" stroke="#303030"/><path d="M568.5 16V20" stroke="#303030"/><path d="M573.5 16V20" stroke="#303030"/><path d="M579.5 1V20" stroke="#303030"/><text x="580" y="12" font-family="Liberation Sans" font-size="11" fill="#1a1a1a" textLength="16.049999999999997" lengthAdjust="spacingAndGlyphs">120</text><path d="M584.5 16V20" stroke="#303030"/><path d="M590.5 16V20" stroke="#303030"/><path d="M595.5 16V20" stroke="#303030"/><path d="M600.5 16V20" stroke="#303030"/><path d="M606.5 13V20" stroke="#303030"/><path d="M611.5 16V20" stroke="#303030"/><path d="M617.5 16V20" stroke="#303030"/><path d="M622.5 16V20" stroke="#303030"/><path d="M627.5 16V20" stroke="#303030"/><path d="M633.5 1V20" stroke="#303030"/><text x="634" y="12" font-family="Liberation Sans" font-size="11" fill="#1a1a1a" textLength="16.049999999999997" lengthAdjust="spacingAndGlyphs">140</text><path d="M638.5 16V20" stroke="#303030"/><path d="M644.5 16V20" stroke="#303030"/><path d="M649.5 16V20" stroke="#303030"/><path d="M655.5 16V20" stroke="#303030"/><path d="M660.5 13V20" stroke="#303030"/><path d="M665.5 16V20" stroke="#303030"/><path d="M671.5 16V20" stroke="#303030"/><path d="M676.5 16V20" stroke="#303030"/><path d="M682.5 16V20" stroke="#303030"/><path d="M687.5 1V20" stroke="#303030"/><text x="688" y="12" font-family="Liberation Sans" font-size="11" fill="#1a1a1a" textLength="16.049999999999997" lengthAdjust="spacingAndGlyphs">160</text><path d="M693.5 16V20" stroke="#303030"/><path d="M698.5 16V20" stroke="#303030"/><path d="M703.5 16V20" stroke="#303030"/><path d="M709.5 16V20" stroke="#303030"/><path d="M714.5 13V20" stroke="#303030"/><path d="M720.5 16V20" stroke="#303030"/><path d="M725.5 16V20" stroke="#303030"/><path d="M730.5 16V20" stroke="#303030"/><path d="M736.5 16V20" stroke="#303030"/><path d="M741.5 1V20" stroke="#303030"/><text x="742" y="12" font-family="Liberation Sans" font-size="11" fill="#1a1a1a" textLength="16.049999999999997" lengthAdjust="spacingAndGlyphs">180</text><path d="M747.5 16V20" stroke="#303030"/><path d="M752.5 16V20" stroke="#303030"/><path d="M758.5 16V20" stroke="#303030"/><path d="M763.5 16V20" stroke="#303030"/><path d="M768.5 13V20" stroke="#303030"/><path d="M774.5 16V20" stroke="#303030"/><path d="M779.5 16V20" stroke="#303030"/><path d="M785.5 16V20" stroke="#303030"/><path d="M790.5 16V20" stroke="#303030"/><path d="M796.5 1V20" stroke="#303030"/><text x="797" y="12" font-family="Liberation Sans" font-size="11" fill="#1a1a1a" textLength="16.049999999999997" lengthAdjust="spacingAndGlyphs">200</text><path d="M801.5 16V20" stroke="#303030"/><path d="M806.5 16V20" stroke="#303030"/><path d="M812.5 16V20" stroke="#303030"/><path d="M817.5 16V20" stroke="#303030"/><path d="M823.5 13V20" stroke="#303030"/><path d="M828.5 16V20" stroke="#303030"/><path d="M833.5 16V20" stroke="#303030"/><path d="M839.5 16V20" stroke="#303030"/><path d="M844.5 16V20" stroke="#303030"/><path d="M850.5 1V20" stroke="#303030"/><text x="851" y="12" font-family="Liberation Sans" font-size="11" fill="#1a1a1a" textLength="16.049999999999997" lengthAdjust="spacingAndGlyphs">220</text><path d="M855.5 16V20" stroke="#303030"/><path d="M861.5 16V20" stroke="#303030"/><path d="M866.5 16V20" stroke="#303030"/><path d="M871.5 16V20" stroke="#303030"/><path d="M877.5 13V20" stroke="#303030"/><path d="M882.5 16V20" stroke="#303030"/><path d="M888.5 16V20" stroke="#303030"/><path d="M893.5 16V20" stroke="#303030"/><path d="M898.5 16V20" stroke="#303030"/><path d="M904.5 1V20" stroke="#303030"/><text x="905" y="12" font-family="Liberation Sans" font-size="11" fill="#1a1a1a" textLength="16.049999999999997" lengthAdjust="spacingAndGlyphs">240</text><path d="M909.5 16V20" stroke="#303030"/><path d="M915.5 16V20" stroke="#303030"/><path d="M920.5 16V20" stroke="#303030"/><path d="M926.5 16V20" stroke="#303030"/><path d="M931.5 13V20" stroke="#303030"/><path d="M936.5 16V20" stroke="#303030"/><path d="M942.5 16V20" stroke="#303030"/><path d="M779.5 1V20" stroke="#e00000"/></svg><svg style="left:0px;top:0px" width="61" height="853" viewBox="0 0 61 853" ><path d="M56 152.5H60" stroke="#303030"/><path d="M56 157.5H60" stroke="#303030"/><path d="M56 163.5H60" stroke="#303030"/><path d="M56 168.5H60" stroke="#303030"/><path d="M41 174.5H60" stroke="#303030"/><text transform="translate(52,177.3) rotate(-90)" text-anchor="end" font-family="Liberation Sans" font-size="11" fill="#1a1a1a" textLength="5.55" lengthAdjust="spacingAndGlyphs">0</text><path d="M56 179.5H60" stroke="#303030"/><path d="M56 184.5H60" stroke="#303030"/><path d="M56 190.5H60" stroke="#303030"/><path d="M56 195.5H60" stroke="#303030"/><path d="M53 201.5H60" stroke="#303030"/><path d="M56 206.5H60" stroke="#303030"/><path d="M56 211.5H60" stroke="#303030"/><path d="M56 217.5H60" stroke="#303030"/><path d="M56 222.5H60" stroke="#303030"/><path d="M41 228.5H60" stroke="#303030"/><text transform="translate(52,231.3) rotate(-90)" text-anchor="end" font-family="Liberation Sans" font-size="11" fill="#1a1a1a" textLength="11.1" lengthAdjust="spacingAndGlyphs">20</text><path d="M56 233.5H60" stroke="#303030"/><path d="M56 239.5H60" stroke="#303030"/><path d="M56 244.5H60" stroke="#303030"/><path d="M56 249.5H60" stroke="#303030"/><path d="M53 255.5H60" stroke="#303030"/><path d="M56 260.5H60" stroke="#303030"/><path d="M56 266.5H60" stroke="#303030"/><path d="M56 271.5H60" stroke="#303030"/><path d="M56 276.5H60" stroke="#303030"/><path d="M41 282.5H60" stroke="#303030"/><text transform="translate(52,285.3) rotate(-90)" text-anchor="end" font-family="Liberation Sans" font-size="11" fill="#1a1a1a" textLength="11.1" lengthAdjust="spacingAndGlyphs">40</text><path d="M56 287.5H60" stroke="#303030"/><path d="M56 293.5H60" stroke="#303030"/><path d="M56 298.5H60" stroke="#303030"/><path d="M56 304.5H60" stroke="#303030"/><path d="M53 309.5H60" stroke="#303030"/><path d="M56 314.5H60" stroke="#303030"/><path d="M56 320.5H60" stroke="#303030"/><path d="M56 325.5H60" stroke="#303030"/><path d="M56 331.5H60" stroke="#303030"/><path d="M41 336.5H60" stroke="#303030"/><text transform="translate(52,339.3) rotate(-90)" text-anchor="end" font-family="Liberation Sans" font-size="11" fill="#1a1a1a" textLength="11.1" lengthAdjust="spacingAndGlyphs">60</text><path d="M56 342.5H60" stroke="#303030"/><path d="M56 347.5H60" stroke="#303030"/><path d="M56 352.5H60" stroke="#303030"/><path d="M56 358.5H60" stroke="#303030"/><path d="M53 363.5H60" stroke="#303030"/><path d="M56 369.5H60" stroke="#303030"/><path d="M56 374.5H60" stroke="#303030"/><path d="M56 379.5H60" stroke="#303030"/><path d="M56 385.5H60" stroke="#303030"/><path d="M41 390.5H60" stroke="#303030"/><text transform="translate(52,393.3) rotate(-90)" text-anchor="end" font-family="Liberation Sans" font-size="11" fill="#1a1a1a" textLength="11.1" lengthAdjust="spacingAndGlyphs">80</text><path d="M56 396.5H60" stroke="#303030"/><path d="M56 401.5H60" stroke="#303030"/><path d="M56 407.5H60" stroke="#303030"/><path d="M56 412.5H60" stroke="#303030"/><path d="M53 417.5H60" stroke="#303030"/><path d="M56 423.5H60" stroke="#303030"/><path d="M56 428.5H60" stroke="#303030"/><path d="M56 434.5H60" stroke="#303030"/><path d="M56 439.5H60" stroke="#303030"/><path d="M41 445.5H60" stroke="#303030"/><text transform="translate(52,448.3) rotate(-90)" text-anchor="end" font-family="Liberation Sans" font-size="11" fill="#1a1a1a" textLength="16.65" lengthAdjust="spacingAndGlyphs">100</text><path d="M56 450.5H60" stroke="#303030"/><path d="M56 455.5H60" stroke="#303030"/><path d="M56 461.5H60" stroke="#303030"/><path d="M56 466.5H60" stroke="#303030"/><path d="M53 472.5H60" stroke="#303030"/><path d="M56 477.5H60" stroke="#303030"/><path d="M56 482.5H60" stroke="#303030"/><path d="M56 488.5H60" stroke="#303030"/><path d="M56 493.5H60" stroke="#303030"/><path d="M41 499.5H60" stroke="#303030"/><text transform="translate(52,502.3) rotate(-90)" text-anchor="end" font-family="Liberation Sans" font-size="11" fill="#1a1a1a" textLength="16.65" lengthAdjust="spacingAndGlyphs">120</text><path d="M56 504.5H60" stroke="#303030"/><path d="M56 510.5H60" stroke="#303030"/><path d="M56 515.5H60" stroke="#303030"/><path d="M56 520.5H60" stroke="#303030"/><path d="M53 526.5H60" stroke="#303030"/><path d="M56 531.5H60" stroke="#303030"/><path d="M56 537.5H60" stroke="#303030"/><path d="M56 542.5H60" stroke="#303030"/><path d="M56 547.5H60" stroke="#303030"/><path d="M41 553.5H60" stroke="#303030"/><text transform="translate(52,556.3) rotate(-90)" text-anchor="end" font-family="Liberation Sans" font-size="11" fill="#1a1a1a" textLength="16.65" lengthAdjust="spacingAndGlyphs">140</text><path d="M56 558.5H60" stroke="#303030"/><path d="M56 564.5H60" stroke="#303030"/><path d="M56 569.5H60" stroke="#303030"/><path d="M56 575.5H60" stroke="#303030"/><path d="M53 580.5H60" stroke="#303030"/><path d="M56 585.5H60" stroke="#303030"/><path d="M56 591.5H60" stroke="#303030"/><path d="M56 596.5H60" stroke="#303030"/><path d="M56 602.5H60" stroke="#303030"/><path d="M41 607.5H60" stroke="#303030"/><text transform="translate(52,610.3) rotate(-90)" text-anchor="end" font-family="Liberation Sans" font-size="11" fill="#1a1a1a" textLength="16.65" lengthAdjust="spacingAndGlyphs">160</text><path d="M56 613.5H60" stroke="#303030"/><path d="M56 618.5H60" stroke="#303030"/><path d="M56 623.5H60" stroke="#303030"/><path d="M56 629.5H60" stroke="#303030"/><path d="M53 634.5H60" stroke="#303030"/><path d="M56 640.5H60" stroke="#303030"/><path d="M56 645.5H60" stroke="#303030"/><path d="M56 650.5H60" stroke="#303030"/><path d="M56 656.5H60" stroke="#303030"/><path d="M41 661.5H60" stroke="#303030"/><text transform="translate(52,664.3) rotate(-90)" text-anchor="end" font-family="Liberation Sans" font-size="11" fill="#1a1a1a" textLength="16.65" lengthAdjust="spacingAndGlyphs">180</text><path d="M56 667.5H60" stroke="#303030"/><path d="M56 672.5H60" stroke="#303030"/><path d="M56 678.5H60" stroke="#303030"/><path d="M56 683.5H60" stroke="#303030"/><path d="M53 688.5H60" stroke="#303030"/><path d="M56 694.5H60" stroke="#303030"/><path d="M56 699.5H60" stroke="#303030"/><path d="M56 705.5H60" stroke="#303030"/><path d="M56 710.5H60" stroke="#303030"/><path d="M41 716.5H60" stroke="#303030"/><text transform="translate(52,719.3) rotate(-90)" text-anchor="end" font-family="Liberation Sans" font-size="11" fill="#1a1a1a" textLength="16.65" lengthAdjust="spacingAndGlyphs">200</text><path d="M56 721.5H60" stroke="#303030"/><path d="M56 726.5H60" stroke="#303030"/><path d="M56 732.5H60" stroke="#303030"/><path d="M56 737.5H60" stroke="#303030"/><path d="M53 743.5H60" stroke="#303030"/><path d="M56 748.5H60" stroke="#303030"/><path d="M56 753.5H60" stroke="#303030"/><path d="M56 759.5H60" stroke="#303030"/><path d="M56 764.5H60" stroke="#303030"/><path d="M41 770.5H60" stroke="#303030"/><text transform="translate(52,773.3) rotate(-90)" text-anchor="end" font-family="Liberation Sans" font-size="11" fill="#1a1a1a" textLength="16.65" lengthAdjust="spacingAndGlyphs">220</text><path d="M56 775.5H60" stroke="#303030"/><path d="M56 781.5H60" stroke="#303030"/><path d="M56 786.5H60" stroke="#303030"/><path d="M56 791.5H60" stroke="#303030"/><path d="M53 797.5H60" stroke="#303030"/><path d="M56 802.5H60" stroke="#303030"/><path d="M56 808.5H60" stroke="#303030"/><path d="M56 813.5H60" stroke="#303030"/><path d="M56 818.5H60" stroke="#303030"/><path d="M41 824.5H60" stroke="#303030"/><text transform="translate(52,827.3) rotate(-90)" text-anchor="end" font-family="Liberation Sans" font-size="11" fill="#1a1a1a" textLength="16.65" lengthAdjust="spacingAndGlyphs">240</text><path d="M56 829.5H60" stroke="#303030"/><path d="M56 835.5H60" stroke="#303030"/><path d="M56 840.5H60" stroke="#303030"/><path d="M56 846.5H60" stroke="#303030"/><path d="M53 851.5H60" stroke="#303030"/><path d="M41 371.5H60" stroke="#e00000"/></svg><div class="a" style="left:60px;top:148px;width:885px;height:705px;background:#d7d7d7"></div><div class="a" style="left:41px;top:852px;width:904px;height:1px;background:#a0a0a0"></div><div class="a" style="left:260px;top:180px;width:496px;height:650px;background:#969696"></div><div class="a" style="left:254px;top:174px;width:496px;height:651px;background:#fff"></div><svg style="left:254px;top:174px" width="496" height="371" viewBox="254 174 496 371"><defs><clipPath id="mc"><rect x="254" y="174" width="496" height="371"/></clipPath></defs><g clip-path="url(#mc)" font-family="Liberation Sans"><g fill="none" stroke="#cccccc" stroke-width="0.9" stroke-linejoin="round"><path d="M254.0,214.8 C254.3,214.8 252.7,213.1 256.0,214.8 C259.3,216.5 267.9,223.9 273.0,224.4 C278.1,224.9 282.2,218.1 285.3,217.6 C288.4,217.1 287.5,221.2 290.8,221.7 C294.1,222.2 301.1,219.8 304.4,220.3 C307.7,220.8 307.9,223.8 309.8,224.4 C311.7,225.0 314.3,223.8 315.3,223.7"/><path d="M259.4,272 L259.4,295 L255.4,297.7 L253,298"/><path d="M253.0,347.0 C253.4,347.1 253.8,346.7 255.4,347.4 C257.0,348.1 259.1,348.3 262.2,350.8 C265.3,353.3 269.3,358.4 273.1,361.7 C276.9,365.0 281.6,365.9 284.0,369.9 C286.4,373.9 285.5,380.8 286.7,384.8 C287.9,388.8 290.2,389.3 290.8,393.0 C291.4,396.7 288.4,402.0 290.1,405.9 C291.8,409.8 297.1,411.8 300.3,415.4 C303.5,419.0 305.9,422.7 308.5,426.3 C311.1,429.9 314.8,431.3 315.3,435.8 C315.8,440.3 314.3,448.1 311.2,452.2 C308.1,456.3 300.2,456.6 297.6,459.0 C295.0,461.4 296.2,462.9 296.2,465.8 C296.2,468.7 298.8,471.0 297.6,475.3 C296.4,479.6 291.1,486.5 289.4,490.3 C287.7,494.1 288.3,493.4 288.0,497.1 C287.7,500.8 286.0,507.2 287.5,511.7 C289.0,516.2 293.2,517.9 296.8,522.8 C300.4,527.7 305.7,535.5 308.0,539.6 C310.3,543.7 309.6,544.9 310.0,546.0"/><path d="M298.9,274.8 C300.1,276.0 300.2,279.2 305.7,281.6 C311.2,284.0 325.1,286.5 330.3,288.4 C335.6,290.3 331.9,290.9 335.7,292.3 C339.5,293.7 348.0,294.4 352.0,296.3 C356.0,298.2 357.6,300.2 358.8,303.1 C360.0,306.0 358.1,310.5 358.8,312.7 C359.5,314.9 361.9,313.7 362.9,315.4 C363.9,317.1 364.1,321.0 364.3,322.2"/><path d="M253,386.9 L286.7,384.8"/><path d="M303,419.5 L368.4,415.4"/><path d="M253,489 L281.2,488.3 L288,495.8"/><path d="M377.2,441.3 L384,515 L384.4,524.7 L382.5,534 L386.3,546"/><path d="M394.3,439.3 L450.4,434.5 L473.6,431.1"/><path d="M442.2,438.6 L450.4,515 L451.5,526.6 L453.3,535.9 L440.3,546"/><path d="M451.5,528.4 C453.1,528.2 457.5,526.2 460.8,527.5 C464.1,528.8 466.5,533.6 470.1,535.9 C473.7,538.2 476.7,539.9 481.3,540.5 C485.9,541.1 492.1,539.3 496.2,539.6 C500.3,539.9 501.7,541.2 505.0,542.0 C508.3,542.8 513.2,543.9 514.9,544.3"/><path d="M545.7,460.4 C545.5,466.6 546.5,487.7 544.4,495.8 C542.3,503.9 537.0,503.3 533.5,506.7 C530.0,510.1 526.5,512.2 524.2,515.4 C521.9,518.5 522.1,519.6 520.5,524.7 C518.9,529.8 515.9,540.9 514.9,544.3"/><path d="M538.9,412.7 L552.5,490.3"/><path d="M556.6,397.7 L558,408.6 L595,401.8 L632.2,395 L656.7,388.9 L664.9,394.4 L675.8,405.9 L698.9,415.4"/><path d="M677.1,408.6 C676.2,411.2 672.4,418.8 671.7,423.6 C671.0,428.4 670.4,431.3 673.0,435.8 C675.6,440.3 685.5,445.2 686.7,449.5 C687.9,453.8 682.0,457.8 679.8,460.4 C677.6,463.0 676.5,463.5 674.4,464.4 C672.3,465.3 668.8,465.6 667.6,465.8"/><path d="M552.5,490.3 L575,487.6 L666.2,469.9 L677.1,512.1 L692.1,510.7"/><path d="M577.7,487.6 L580.4,503.9 L595.4,487.6 L609,483.5 L621.3,493 L640.4,503.9 L646,506"/><path d="M606.3,493 L604.3,515.4 L591.3,528.4 L582,528.4 L576.4,546"/><path d="M522.6,174.0 C523.8,181.1 527.7,205.8 529.4,214.8 C531.1,223.8 529.2,220.0 532.1,225.7 C535.0,231.4 541.9,242.8 545.7,247.5 C549.5,252.2 548.6,251.1 553.9,252.3 C559.1,253.5 570.0,253.0 575.7,254.3 C581.4,255.6 583.6,258.4 586.6,259.8 C589.6,261.2 590.7,262.3 592.7,262.5 C594.7,262.7 595.5,259.4 598.1,261.1 C600.7,262.8 603.9,270.1 607.7,272.0 C611.5,273.9 613.7,274.3 619.9,272.0 C626.1,269.7 637.6,261.0 643.1,259.1 C648.6,257.2 649.6,259.1 651.3,261.1 C653.0,263.1 651.4,268.4 652.6,270.7 C653.8,273.0 657.1,273.4 658.0,274.0"/><path d="M615.9,320.9 L629.5,304.5 L640.4,288.2 L649.9,281.6 L718,264.5"/><path d="M681.5,266 L682,300 L684,307.2 L689.4,322.2 L694.8,329 L700.3,352.2 L700.3,375.3 L704.4,400 L703,395 L707.1,407.3 L704.4,412.7"/><path d="M718.0,264.0 C718.2,266.4 720.0,272.2 719.3,277.5 C718.6,282.8 714.8,286.4 713.9,294.0 C713.0,301.6 713.7,311.9 713.9,320.9 C714.1,329.9 714.6,340.6 715.3,345.4 C716.0,350.2 717.5,347.6 718.0,348.1"/><path d="M738.4,174.0 C738.4,175.7 739.1,179.2 738.4,183.5 C737.7,187.8 735.0,193.0 734.3,198.5 C733.6,204.0 734.1,209.1 734.3,214.8 C734.5,220.5 736.4,225.2 735.7,231.2 C735.0,237.2 732.8,245.0 730.2,248.9 C727.6,252.8 722.8,251.1 720.7,253.7 C718.6,256.3 718.5,262.1 718.0,263.9"/><path d="M724.8,253 L734.3,280 L751,322"/><path d="M700.3,351.5 L745.2,341.3 L751,336"/><path d="M700.3,376.7 L751,367"/><path d="M738.4,368.5 L742.5,380 L744.7,392"/><path d="M696.3,407.9 L699.8,415.4 L700.4,422.2"/></g><text x="688.7" y="445.90000000000003" font-size="7" fill="#cecece" textLength="51.299999999999955" lengthAdjust="spacing">NEW JERSEY</text><text x="642.5" y="502.20000000000005" font-size="7" fill="#cecece" textLength="57.5" lengthAdjust="spacing">DELAWARE</text><text x="656" y="502.20000000000005" font-size="7" fill="#cecece" textLength="77" lengthAdjust="spacing">MARYLAND</text><g fill="#bfbfbf"><path d="M262.9,270.7 C266.5,265.5 276.4,250.4 285.3,242.1 C294.2,233.8 307.9,227.9 313.9,223.0 C319.9,218.1 317.4,216.8 319.5,214.0 C321.6,211.2 324.0,208.8 326.0,207.0 C328.0,205.2 329.5,205.4 331.0,203.5 C332.5,201.6 333.2,198.1 334.5,196.0 C335.8,193.9 337.2,193.3 338.4,191.7 C339.6,190.1 339.2,187.4 341.1,186.9 C343.0,186.4 346.4,188.2 349.3,189.0 C352.2,189.8 352.7,191.3 357.5,191.7 C362.3,192.0 372.0,189.8 376.5,191.0 C381.0,192.2 381.5,195.3 383.4,198.5 C385.3,201.7 385.5,206.1 387.4,209.4 C389.3,212.7 389.8,216.4 394.3,217.6 C398.8,218.8 410.2,214.3 413.3,216.2 C416.4,218.1 410.6,224.9 412.0,228.5 C413.4,232.1 420.1,232.8 421.5,236.6 C422.9,240.4 418.9,247.4 420.1,250.3 C421.3,253.2 427.1,249.9 428.3,253.0 C429.5,256.1 429.1,265.4 426.9,268.0 C424.7,270.6 418.4,269.7 416.0,268.0 C413.6,266.3 417.8,259.1 413.3,258.4 C408.8,257.7 395.7,261.5 390.2,263.9 C384.7,266.3 386.1,270.6 382.0,272.0 C377.9,273.4 371.3,273.9 367.0,272.0 C362.7,270.1 361.1,263.5 357.5,261.1 C353.9,258.7 349.5,257.9 346.6,258.4 C343.7,258.9 341.8,264.6 341.1,263.9 C340.4,263.2 341.1,257.9 342.5,254.3 C343.9,250.7 347.1,245.8 349.3,243.4 C351.5,241.0 355.3,241.4 354.8,240.7 C354.3,240.0 349.5,238.2 346.6,239.4 C343.7,240.6 340.3,245.4 338.4,247.5 C336.5,249.6 337.6,249.7 335.7,251.6 C333.8,253.5 331.1,255.8 327.5,258.4 C323.9,261.0 320.3,263.7 315.3,266.6 C310.3,269.5 303.6,273.4 298.9,274.8 C294.2,276.2 292.3,275.8 288.7,274.8 C285.1,273.8 282.7,269.8 278.5,269.3 C274.3,268.8 267.6,271.8 264.9,272.0 C262.2,272.2 259.3,275.9 262.9,270.7Z"/><path d="M395.6,438.6 C397.9,434.8 401.0,427.9 402.4,422.2 C403.8,416.5 403.6,410.7 403.8,405.9 C404.0,401.1 405.5,400.4 403.8,395.0 C402.1,389.6 395.7,379.9 394.3,375.3 C392.9,370.7 395.8,371.6 395.6,368.5 C395.4,365.4 392.6,360.8 392.9,357.6 C393.2,354.4 396.8,353.9 397.4,350.0 C398.0,346.1 396.3,338.2 396.6,335.2 C396.9,332.2 398.1,334.5 399.1,332.8 C400.1,331.1 400.3,328.3 402.3,325.4 C404.3,322.5 409.1,316.1 410.5,316.4 C411.9,316.7 409.8,324.9 410.5,327.1 C411.2,329.3 414.2,330.9 414.6,328.7 C415.0,326.5 413.0,317.9 413.0,314.8 C413.0,311.7 412.9,312.2 414.6,310.7 C416.3,309.2 422.1,307.8 422.8,306.2 C423.5,304.6 419.3,303.5 418.7,301.7 C418.1,299.9 418.4,297.7 419.5,296.0 C420.6,294.3 422.3,292.2 425.2,291.9 C428.1,291.6 433.3,292.9 435.9,294.4 C438.5,295.9 438.1,299.0 440.0,300.2 C441.9,301.4 444.4,300.7 446.8,301.3 C449.2,301.9 451.6,302.2 453.6,303.6 C455.6,305.0 457.3,307.1 458.2,309.3 C459.1,311.5 457.9,313.7 458.7,316.1 C459.5,318.5 462.0,319.1 462.7,322.9 C463.4,326.7 463.3,334.3 462.7,337.7 C462.1,341.1 460.0,340.0 459.3,342.2 C458.6,344.4 459.8,348.1 458.7,350.1 C457.6,352.1 454.1,351.3 453.0,353.5 C451.9,355.7 451.6,360.4 452.5,362.6 C453.4,364.8 456.2,366.4 458.2,366.0 C460.2,365.6 462.4,362.8 463.8,360.4 C465.2,358.0 464.3,354.6 466.1,352.4 C467.9,350.2 471.8,348.3 474.0,347.9 C476.2,347.5 477.0,348.3 478.6,350.1 C480.2,351.9 481.1,352.5 483.1,358.1 C485.1,363.7 487.1,378.9 489.9,381.9 C492.7,384.9 496.4,378.1 499.0,375.1 C501.6,372.1 504.3,370.5 504.7,364.9 C505.1,359.3 501.6,348.5 501.3,343.3 C501.0,338.1 502.2,337.7 503.0,335.4 C503.8,333.1 505.3,331.9 506.1,330.0 C506.9,328.1 507.5,326.8 507.5,324.3 C507.5,321.8 507.1,318.5 506.1,315.8 C505.1,313.1 503.7,311.0 501.9,308.8 C500.1,306.6 495.4,304.5 495.6,303.2 C495.8,301.9 501.7,300.9 503.3,301.1 C504.9,301.3 503.2,303.0 504.7,304.6 C506.2,306.2 510.7,308.1 511.7,310.2 C512.7,312.3 509.8,316.0 510.3,316.5 C510.8,317.0 513.5,312.1 514.5,313.0 C515.5,313.9 515.0,320.8 516.0,321.5 C517.0,322.2 518.7,317.4 520.2,317.2 C521.7,317.0 521.9,319.0 524.4,320.1 C526.9,321.2 532.1,323.4 534.2,323.6 C536.3,323.8 536.4,323.4 536.4,321.5 C536.4,319.6 533.3,314.9 534.2,313.0 C535.1,311.1 541.0,312.4 541.3,310.9 C541.6,309.4 537.7,306.9 535.7,304.6 C533.7,302.3 532.0,299.8 530.0,297.5 C528.0,295.2 526.1,293.2 524.4,291.2 C522.7,289.2 521.8,288.3 520.2,286.3 C518.6,284.3 516.7,282.0 515.2,280.0 C513.7,278.0 514.0,275.9 511.7,275.0 C509.4,274.1 505.3,275.0 501.9,275.0 C498.5,275.0 493.5,273.8 492.0,275.0 C490.5,276.2 493.4,279.0 493.4,282.1 C493.4,285.2 493.0,290.7 492.0,292.6 C491.0,294.5 491.6,294.0 487.8,293.0 C484.0,292.0 477.2,288.5 470.4,287.1 C463.6,285.7 454.4,285.4 449.1,285.2 C443.8,285.0 443.9,286.5 440.0,286.2 C436.1,285.9 429.6,283.0 426.9,283.7 C424.2,284.4 426.0,290.2 424.4,290.3 C422.8,290.4 421.0,285.7 417.9,284.5 C414.8,283.3 409.7,283.0 406.4,283.7 C403.1,284.4 401.7,287.4 399.1,288.6 C396.5,289.8 394.3,287.9 391.7,290.3 C389.1,292.7 385.4,301.9 384.3,302.5 C383.2,303.1 385.8,294.8 385.2,293.5 C384.6,292.2 382.5,293.9 381.1,295.2 C379.7,296.5 377.9,301.2 377.0,300.9 C376.1,300.6 377.1,292.8 376.2,293.5 C375.3,294.2 374.1,299.7 372.1,305.0 C370.1,310.3 366.7,319.5 364.7,323.8 C362.7,328.1 361.8,326.2 360.6,329.5 C359.4,332.8 357.5,341.0 357.8,342.6 C358.1,344.2 360.8,340.4 362.3,338.5 C363.8,336.6 365.1,333.7 366.4,332.0 C367.7,330.3 368.2,331.3 369.6,328.7 C371.0,326.1 372.9,319.8 374.5,317.2 C376.1,314.6 378.2,314.3 378.6,314.0 C379.0,313.7 378.3,311.9 377.0,315.6 C375.7,319.3 372.6,329.2 371.3,335.2 C370.0,341.2 369.9,346.8 369.6,350.0 C369.3,353.2 370.2,351.5 369.7,353.5 C369.2,355.5 367.5,358.4 367.0,361.7 C366.5,365.0 367.5,368.3 367.0,372.6 C366.5,376.9 364.5,382.3 364.3,386.2 C364.1,390.1 364.8,391.1 365.7,395.0 C366.6,398.9 369.0,403.8 369.7,408.6 C370.4,413.4 368.5,416.9 369.7,422.2 C370.9,427.4 374.7,434.9 376.5,438.6 C378.3,442.3 378.7,442.3 380.0,443.5 C381.3,444.7 382.3,445.5 384.0,445.6 C385.7,445.7 387.5,445.2 389.5,444.0 C391.5,442.8 393.3,442.4 395.6,438.6Z"/><path d="M435.5,271.6 C438.9,270.7 448.2,270.5 455.0,270.5 C461.8,270.5 467.9,271.2 474.3,271.6 C480.7,272.0 488.7,271.2 491.7,272.6 C494.7,274.0 494.1,277.7 491.7,279.4 C489.3,281.1 483.0,281.8 478.1,282.3 C473.2,282.8 467.8,282.1 463.6,282.3 C459.4,282.5 457.1,283.8 453.9,283.3 C450.7,282.8 446.9,280.8 445.2,279.4 C443.5,278.0 445.9,276.2 444.2,275.5 C442.5,274.8 437.0,276.2 435.5,275.5 C434.0,274.8 432.1,272.5 435.5,271.6Z"/><path d="M473.6,430.4 C471.9,427.8 475.5,423.1 477.6,420.9 C479.7,418.7 482.9,418.1 485.8,418.1 C488.7,418.1 492.3,421.6 494.0,420.9 C495.7,420.2 493.4,416.5 495.3,414.1 C497.2,411.7 502.3,409.8 504.9,407.3 C507.5,404.8 506.5,403.0 510.3,400.0 C514.1,397.0 521.7,392.2 526.7,390.3 C531.7,388.4 536.0,390.6 538.9,388.9 C541.8,387.2 539.8,382.7 543.0,380.8 C546.2,378.9 552.0,379.0 557.0,378.0 C562.0,377.0 569.3,374.3 571.6,375.3 C573.9,376.3 572.4,380.1 570.2,383.5 C568.0,386.9 564.5,389.9 559.3,395.0 C554.1,400.1 546.5,407.7 540.3,412.7 C534.1,417.7 528.2,420.0 523.9,423.6 C519.6,427.2 520.1,430.2 515.8,433.1 C511.5,436.0 504.4,439.4 499.4,439.9 C494.4,440.4 491.7,437.5 487.2,435.8 C482.7,434.1 475.3,433.0 473.6,430.4Z"/><path d="M483.5,404.0 C483.7,402.5 485.5,400.6 487.0,400.0 C488.5,399.4 490.8,399.8 492.0,400.5 C493.2,401.2 494.2,402.7 494.0,404.0 C493.8,405.3 492.4,407.2 491.0,408.0 C489.6,408.8 487.3,409.2 486.0,408.5 C484.7,407.8 483.3,405.5 483.5,404.0Z"/><path d="M549.8,361.7 C549.1,359.8 549.6,356.9 551.8,353.6 C554.0,350.3 557.9,346.3 562.6,342.9 C567.3,339.5 573.4,336.5 578.6,334.2 C583.8,331.9 588.3,330.4 592.1,329.5 C595.9,328.6 597.3,329.3 600.1,328.8 C602.9,328.3 606.3,328.1 608.2,326.8 C610.1,325.5 608.9,322.7 610.8,321.5 C612.7,320.3 616.6,319.2 618.9,320.1 C621.2,321.0 622.8,323.7 624.2,326.8 C625.6,329.9 627.8,334.5 626.9,337.6 C626.0,340.7 621.7,342.4 618.9,344.3 C616.1,346.2 613.6,346.7 610.8,348.3 C608.0,349.9 604.9,352.4 602.8,353.6 C600.7,354.8 601.4,355.2 598.8,355.0 C596.2,354.8 592.0,352.3 588.0,352.3 C584.0,352.3 580.0,353.6 576.0,355.0 C572.0,356.4 568.7,358.8 565.2,360.4 C561.7,362.0 558.5,364.2 555.8,364.4 C553.1,364.6 550.5,363.6 549.8,361.7Z"/><path d="M517.0,261.0 C517.4,260.2 521.7,258.2 524.0,257.5 C526.3,256.8 527.9,257.3 530.0,257.0 C532.1,256.7 534.4,255.3 536.0,255.7 C537.6,256.1 539.5,258.0 539.0,259.0 C538.5,260.0 535.1,260.6 533.0,261.5 C530.9,262.4 528.9,263.8 527.0,263.9 C525.1,264.0 523.8,262.5 522.0,262.0 C520.2,261.5 516.6,261.8 517.0,261.0Z"/><path d="M348.5,357.0 C349.0,355.7 350.3,355.4 351.0,356.3 C351.7,357.2 352.7,359.6 352.7,362.0 C352.7,364.4 351.8,369.5 351.0,369.9 C350.2,370.2 348.4,366.3 348.0,364.0 C347.6,361.7 348.0,358.3 348.5,357.0Z"/><path d="M661.7,476.1 C663.0,475.5 665.1,475.8 665.3,477.3 C665.5,478.8 663.9,482.0 662.9,484.5 C661.9,487.0 659.3,488.5 659.3,491.7 C659.3,494.9 661.2,499.2 662.9,502.6 C664.6,506.0 667.4,508.1 668.9,511.0 C670.4,513.9 670.0,516.7 671.3,519.4 C672.6,522.1 674.4,524.9 676.1,526.6 C677.8,528.3 681.1,528.1 680.9,529.0 C680.7,529.9 675.3,528.5 674.9,531.5 C674.5,534.5 679.5,543.5 678.5,546.0 C677.5,548.5 671.4,548.5 668.9,546.0 C666.4,543.5 667.1,534.9 664.1,531.5 C661.1,528.1 655.0,527.9 652.0,526.6 C649.0,525.3 646.6,524.8 647.2,524.2 C647.8,523.6 652.6,523.0 655.6,523.0 C658.6,523.0 663.0,525.7 664.1,524.2 C665.2,522.7 663.6,517.1 661.7,514.6 C659.8,512.1 653.4,510.9 653.2,509.8 C653.0,508.8 660.3,510.9 660.5,508.6 C660.7,506.3 656.1,499.8 654.4,496.6 C652.7,493.4 650.6,492.0 650.8,490.5 C651.0,489.0 654.3,489.8 655.6,488.1 C656.9,486.4 657.0,483.0 658.1,480.9 C659.2,478.8 660.4,476.7 661.7,476.1Z"/><path d="M752,386 L748.8,391.2 L741.3,393.6 L732.5,396.3 L719.5,401.1 L714.1,405.2 L705.9,413.4 L700.4,422.2 L696.3,429 L695.7,435.9 L703.8,440 L705,452 L702.6,464.1 L700.2,473.7 L696.6,479.7 L694.2,488.1 L691.7,492 L690.5,486.9 L685.7,484.5 L678.5,480.9 L673.7,476.1 L671.3,468.9 L672.5,466.5 L670.1,470.1 L673.7,479.7 L679.7,486.9 L688.1,493 L689.3,502.6 L690.5,507.4 L693,512.2 L690.5,524.2 L688.1,536.3 L686.9,548 L752,548Z" fill="#c9c9c9"/></g><path d="M741.3,404.5 C740.5,405.2 741.0,405.6 739.3,407.2 C737.6,408.8 735.3,410.8 731.8,413.4 C728.3,416.0 723.2,419.9 719.5,422.2 C715.8,424.5 714.0,424.9 710.7,426.3 C707.4,427.7 702.6,429.4 700.4,430.4 C698.2,431.4 698.0,432.9 698.4,431.8 C698.8,430.7 701.2,426.7 702.5,424.3 C703.8,421.9 703.6,419.8 705.9,418.1 C708.2,416.4 712.3,415.6 715.4,414.7 C718.5,413.8 720.9,413.8 723.6,412.7 C726.3,411.6 729.2,410.2 731.1,408.6 C733.0,407.0 732.2,404.7 734.5,403.8 C736.8,402.9 742.8,403.1 744.0,403.2 C745.2,403.3 742.1,403.8 741.3,404.5Z" fill="#fff"/><path d="M328.5,211 L333,201 L337.5,193" stroke="#fff" stroke-width="1.4" fill="none"/><path d="M323.4,227.5 C324.1,225.8 328.6,221.1 331.0,219.0 C333.4,216.9 336.3,215.2 337.0,215.5 C337.7,215.8 336.8,218.7 335.0,221.0 C333.2,223.3 329.0,227.4 327.0,228.5 C325.0,229.6 322.7,229.2 323.4,227.5Z" fill="#fff"/><path d="M392.2,225.5 C392.2,224.9 394.8,223.6 396.0,223.5 C397.2,223.4 399.0,224.4 399.0,225.0 C399.0,225.6 397.2,227.1 396.0,227.2 C394.8,227.3 392.2,226.1 392.2,225.5Z" fill="#fff"/><g fill="none" stroke="#bfbfbf" stroke-linecap="round" stroke-linejoin="round"><path d="M624,321 L632,308 L641,292 L650,281 L658,272 L664,262" stroke-width="1.6"/><path d="M664,262 L670,252 L673,241 L680,230" stroke-width="2.2"/><path d="M680,230 L689,216 L695,209 L708,200" stroke-width="2.6"/><path d="M708,200 L716,191" stroke-width="4"/><path d="M715,192 L721,184 L727,173" stroke-width="8"/><path d="M681.5,272 L682,282 L683,294" stroke-width="2.8"/><path d="M489.9,382 L489.5,400" stroke-width="1"/><path d="M487,408 L482,414 L479,421" stroke-width="1.6"/><path d="M564.8,361.7 L568,368 L571,375" stroke-width="0.9"/><path d="M428,268 L432,272 L436,273" stroke-width="1.5"/><path d="M645,531 L655,537 L664,542" stroke-width="1.2"/><path d="M640,502 L646,504" stroke-width="1.4"/></g><g fill="none" stroke="#c4c4c4" stroke-linecap="round"><path d="M491.5,184 L493,188 L492.5,191" stroke-width="1.6"/><path d="M433,202 L442,193.5" stroke-width="0.7"/><path d="M487.5,231.5 L490,236 L489.5,240 L491,244.5" stroke-width="0.8"/><path d="M518.5,229 L521,234 L520.5,238 L522,240.5" stroke-width="1"/><path d="M543.5,207.5 Q546,205.5 548,208.5" stroke-width="1.6"/><path d="M538,227 L541,231 L544,232 L547,236" stroke-width="0.9"/><path d="M568,197 L569,203 L567.5,208 M571,200 L573,206 L576,207 M580,196 L582,203 L585,209 L587,215" stroke-width="0.8"/><path d="M586,198 L590,204 L592,212 L597,217" stroke-width="1.1"/><path d="M608,226 L611,220 L613,227" stroke-width="0.9"/><path d="M270,194 Q273,191.5 275.5,196" stroke-width="1.4"/><path d="M289,192 L292,196 L297,195" stroke-width="1.2"/><path d="M549,314 L550.5,320 L550,325" stroke-width="1.3"/><path d="M633,366.5 Q637,364.5 641,366" stroke-width="1.5"/></g><text x="269" y="256.90000000000003" font-size="7" fill="#cecece" textLength="50.39999999999998" lengthAdjust="spacing">MINNESOTA</text><text x="458.6" y="268.5" font-size="7" fill="#cecece" textLength="38.099999999999966" lengthAdjust="spacing">ONTARIO</text><text x="596.8" y="217.0" font-size="7" fill="#cecece" textLength="33.30000000000007" lengthAdjust="spacing">QUÉBEC</text><text x="715.9" y="242.2" font-size="7" fill="#cecece" textLength="28.600000000000023" lengthAdjust="spacing">MAINE</text><text x="294.8" y="346.90000000000003" font-size="7" fill="#cecece" textLength="49.69999999999999" lengthAdjust="spacing">WISCONSIN</text><text x="421.1" y="315.0" font-size="7" fill="#cecece" textLength="42.19999999999999" lengthAdjust="spacing">MICHIGAN</text><text x="641.7" y="352.70000000000005" font-size="7" fill="#cecece" textLength="44.299999999999955" lengthAdjust="spacing">NEW YORK</text><text x="648.5" y="365.70000000000005" font-size="7" fill="#cecece" textLength="74.89999999999998" lengthAdjust="spacing">MASSACHUSETTS</text><text x="685.3" y="308.20000000000005" font-size="7" fill="#cecece" textLength="51.700000000000045" lengthAdjust="spacing">HAMPSHIRE</text><text x="697.5" y="311.90000000000003" font-size="7" fill="#cecece" textLength="32.700000000000045" lengthAdjust="spacing">VERMONT</text><text x="660.1" y="387.20000000000005" font-size="7" fill="#cecece" textLength="59.89999999999998" lengthAdjust="spacing">CONNECTICUT</text><text x="679.8" y="387.20000000000005" font-size="7" fill="#cecece" textLength="64.0" lengthAdjust="spacing">RHODE ISLAND</text><text x="265.6" y="442.5" font-size="7" fill="#cecece" textLength="23.799999999999955" lengthAdjust="spacing">IOWA</text><text x="322.8" y="486.1" font-size="7" fill="#cecece" textLength="36.0" lengthAdjust="spacing">ILLINOIS</text><text x="395.6" y="494.6" font-size="7" fill="#cecece" textLength="38.89999999999998" lengthAdjust="spacing">INDIANA</text><text x="274.9" y="517.6" font-size="7" fill="#cecece" textLength="42.400000000000034" lengthAdjust="spacing">MISSOURI</text><text x="485.8" y="478.90000000000003" font-size="7" fill="#cecece" textLength="21.099999999999966" lengthAdjust="spacing">OHIO</text><text x="575.7" y="442.5" font-size="7" fill="#cecece" textLength="65.29999999999995" lengthAdjust="spacing">PENNSYLVANIA</text><text x="563.3" y="514.6" font-size="7" fill="#cecece" textLength="68.0" lengthAdjust="spacing">WEST VIRGINIA</text><text x="600.6" y="533.3000000000001" font-size="7" fill="#cecece" textLength="39.10000000000002" lengthAdjust="spacing">VIRGINIA</text><text x="471" y="536.6" font-size="7" fill="#cecece" textLength="44" lengthAdjust="spacing">KENTUCKY</text><text x="358.2" y="236.70000000000002" font-size="8" font-style="italic" fill="#8a8a8a" textLength="43.5" lengthAdjust="spacingAndGlyphs">Lake Superior</text><text x="384" y="384.90000000000003" font-size="8" font-style="italic" fill="#8a8a8a" textLength="45.69999999999999" lengthAdjust="spacingAndGlyphs">Lake Michigan</text><text x="467.4" y="314.1" font-size="8" font-style="italic" fill="#8a8a8a" textLength="35.400000000000034" lengthAdjust="spacingAndGlyphs">Lake Huron</text><text x="525.3" y="401.90000000000003" font-size="8" font-style="italic" fill="#8a8a8a" textLength="28.600000000000023" lengthAdjust="spacingAndGlyphs">Lake Erie</text><text x="574.5" y="347.1" font-size="8" font-style="italic" fill="#8a8a8a" textLength="39.299999999999955" lengthAdjust="spacingAndGlyphs">Lake Ontario</text><text x="342.5" y="226.79999999999998" font-size="8.6" font-weight="bold" fill="#222" textLength="45.60000000000002" lengthAdjust="spacingAndGlyphs">Mishipeshu</text><text x="535.5" y="224.79999999999998" font-size="8.6" font-weight="bold" fill="#222" textLength="44.299999999999955" lengthAdjust="spacingAndGlyphs">Mugwump</text><text x="564.8" y="279.20000000000005" font-size="8.6" font-weight="bold" fill="#222" textLength="27.200000000000045" lengthAdjust="spacingAndGlyphs">Mussie</text><text x="671" y="264.20000000000005" font-size="8.6" font-weight="bold" fill="#222" textLength="39.5" lengthAdjust="spacingAndGlyphs">Memphré</text><text x="654" y="308.70000000000005" font-size="8.6" font-weight="bold" fill="#222" textLength="27.899999999999977" lengthAdjust="spacingAndGlyphs">Champ</text><text x="637" y="329.40000000000003" font-size="8.6" font-weight="bold" fill="#222" textLength="38.10000000000002" lengthAdjust="spacingAndGlyphs">Schroonie</text><text x="555.3" y="322.6" font-size="8.6" font-weight="bold" fill="#222" textLength="33.30000000000007" lengthAdjust="spacingAndGlyphs">Igopogo</text><text x="538.9" y="338.90000000000003" font-size="8.6" font-weight="bold" fill="#222" textLength="65.10000000000002" lengthAdjust="spacingAndGlyphs">Gaasyendietha</text><text x="531.8" y="348.20000000000005" font-size="8.6" font-weight="bold" fill="#222" textLength="30.90000000000009" lengthAdjust="spacingAndGlyphs">Kingstie</text><text x="595.4" y="370.20000000000005" font-size="8.6" font-weight="bold" fill="#222" textLength="89.89999999999998" lengthAdjust="spacingAndGlyphs">Hudson River Monster</text><text x="631.5" y="379.5" font-size="8.6" font-weight="bold" fill="#222" textLength="20.399999999999977" lengthAdjust="spacingAndGlyphs">Kipsy</text><text x="646.5" y="403.3" font-size="8.6" font-weight="bold" fill="#222" textLength="22.5" lengthAdjust="spacingAndGlyphs">Teedy</text><text x="333.7" y="394.8" font-size="8.6" font-weight="bold" fill="#222" textLength="25.100000000000023" lengthAdjust="spacingAndGlyphs">Bozho</text><text x="399.7" y="440.0" font-size="8.6" font-weight="bold" fill="#222" textLength="63.30000000000001" lengthAdjust="spacingAndGlyphs">Beast of 'Busco</text><text x="399.7" y="449.20000000000005" font-size="8.6" font-weight="bold" fill="#222" textLength="63.30000000000001" lengthAdjust="spacingAndGlyphs">Oscar the Turtle</text><text x="382" y="474.40000000000003" font-size="8.6" font-weight="bold" fill="#222" textLength="39.80000000000001" lengthAdjust="spacingAndGlyphs">Man-i-too</text><text x="547.8" y="421.5" font-size="8.6" font-weight="bold" fill="#222" textLength="25.800000000000068" lengthAdjust="spacingAndGlyphs">Bessie</text><text x="527.3" y="430.5" font-size="8.6" font-weight="bold" fill="#222" textLength="68.70000000000005" lengthAdjust="spacingAndGlyphs">South Bay Bessie</text><rect x="341.1" y="228.5" width="6.2" height="6.2" fill="#000"/><rect x="529.4" y="222.3" width="6.2" height="6.2" fill="#000"/><rect x="593.4" y="265.2" width="6.2" height="6.2" fill="#000"/><rect x="698.2" y="263.2" width="6.2" height="6.2" fill="#000"/><rect x="681.9" y="293.6" width="6.2" height="6.2" fill="#000"/><rect x="676.4" y="314.7" width="6.2" height="6.2" fill="#000"/><rect x="549.1" y="320.9" width="6.2" height="6.2" fill="#000"/><rect x="598.8" y="337.9" width="6.2" height="6.2" fill="#000"/><rect x="563.4" y="347.4" width="6.2" height="6.2" fill="#000"/><rect x="686.7" y="355.6" width="6.2" height="6.2" fill="#000"/><rect x="664.9" y="401.8" width="6.2" height="6.2" fill="#000"/><rect x="326.8" y="393.7" width="6.2" height="6.2" fill="#000"/><rect x="428.3" y="452.2" width="6.2" height="6.2" fill="#000"/><rect x="408.5" y="460.4" width="6.2" height="6.2" fill="#000"/><rect x="519.2" y="406.6" width="6.2" height="6.2" fill="#000"/></g></svg><svg style="left:254px;top:174px" width="496" height="371" viewBox="0 0 496 371" ><rect x="0.5" y="0.5" width="10" height="10" fill="#fff" stroke="#2f88c8" stroke-width="1"/><rect x="242.5" y="0.5" width="10" height="10" fill="#fff" stroke="#2f88c8" stroke-width="1"/><rect x="485.5" y="0.5" width="10" height="10" fill="#fff" stroke="#2f88c8" stroke-width="1"/><rect x="0.5" y="180.5" width="10" height="10" fill="#fff" stroke="#2f88c8" stroke-width="1"/><rect x="485.5" y="180.5" width="10" height="10" fill="#fff" stroke="#2f88c8" stroke-width="1"/><rect x="0.5" y="360.5" width="10" height="10" fill="#fff" stroke="#2f88c8" stroke-width="1"/><rect x="242.5" y="360.5" width="10" height="10" fill="#fff" stroke="#2f88c8" stroke-width="1"/><rect x="485.5" y="360.5" width="10" height="10" fill="#fff" stroke="#2f88c8" stroke-width="1"/><rect x="0.5" y="0.5" width="495" height="370" fill="none" stroke="#3aa4de" stroke-width="1"/><rect x="0.5" y="0.5" width="495" height="370" fill="none" stroke="#5c0630" stroke-width="1" stroke-dasharray="4 2"/></svg><div class="a" style="left:945px;top:128px;width:396px;height:725px;background:#f0f0f0"></div><svg style="left:948px;top:484px" width="1" height="17" viewBox="0 0 1 17" ><rect x="0" y="0" width="1" height="1" fill="#b0b0b0"/><rect x="0" y="3" width="1" height="1" fill="#b0b0b0"/><rect x="0" y="6" width="1" height="1" fill="#b0b0b0"/><rect x="0" y="9" width="1" height="1" fill="#b0b0b0"/><rect x="0" y="12" width="1" height="1" fill="#b0b0b0"/><rect x="0" y="15" width="1" height="1" fill="#b0b0b0"/></svg><div class="a" style="left:951px;top:152px;width:390px;height:1px;background:#b9b9b9"></div><div class="a" style="left:1003px;top:131px;width:85px;height:22px;background:linear-gradient(#e9e9e9,#dedede);border:1px solid #bfbfbf;border-bottom:none;border-radius:3px 3px 0 0"></div><div class="t" style="left:1011px;top:137px;font-size:12px"></div><svg style="left:1013px;top:132px" width="65" height="19"><text x="0.10" y="15.40" font-family="Liberation Sans" font-size="11.3" font-weight="400" fill="#000" textLength="62.1" lengthAdjust="spacingAndGlyphs" >Undo History</text></svg><div class="a" style="left:951px;top:129px;width:52px;height:24px;background:linear-gradient(#ffffff,#f2f2f2);border:1px solid #b9b9b9;border-bottom:none;border-radius:3px 3px 0 0"></div><div class="t" style="left:959px;top:136px;font-size:12px"></div><svg style="left:962px;top:132px" width="30" height="19"><text x="0.50" y="14.70" font-family="Liberation Sans" font-size="11.3" font-weight="400" fill="#000" textLength="27.1" lengthAdjust="spacingAndGlyphs" >Items</text></svg><svg style="left:955px;top:153px" width="31" height="19"><text x="0.70" y="15.10" font-family="Liberation Sans" font-size="11.3" font-weight="400" fill="#000" textLength="28.2" lengthAdjust="spacingAndGlyphs" >Items</text></svg><svg style="left:1314px;top:158px" width="26" height="12" viewBox="0 0 26 12" ><rect x="0.5" y="0.5" width="10.5" height="10.5" rx="2" fill="none" stroke="#777"/><rect x="4" y="2.5" width="4.5" height="4.5" fill="none" stroke="#666" stroke-width="0.9"/><rect x="2.5" y="4.5" width="4" height="4" fill="#f0f0f0" stroke="#666" stroke-width="0.9"/><rect x="14.5" y="0.5" width="10.5" height="10.5" rx="2" fill="none" stroke="#777"/><path d="M17 3 L22.5 8.5 M22.5 3 L17 8.5" stroke="#555" stroke-width="1.6"/></svg><div class="a" style="left:951px;top:173px;width:390px;height:101px;background:#fff;border:1px solid #a8a8a8"></div><div class="a" style="left:952px;top:174px;width:388px;height:20px;background:linear-gradient(#fbfbfb,#ececec);border-bottom:1px solid #b0b0b0"></div><div class="a" style="left:987px;top:175px;width:1px;height:17px;background:#c8c8c8"></div><div class="a" style="left:1023px;top:175px;width:1px;height:17px;background:#c8c8c8"></div><svg style="left:954.5px;top:178.5px" width="16" height="11" viewBox="0 0 16 11" ><path d="M0.5 5.5 Q7.5 -2 15 5.5 Q7.5 12.5 0.5 5.5Z" fill="#efefef" stroke="#a8a8a8"/><circle cx="7.5" cy="5" r="3.3" fill="#8e8e8e"/><circle cx="7.5" cy="5" r="1.3" fill="#333"/></svg><svg style="left:991.5px;top:177px" width="13" height="15" viewBox="0 0 13 15" ><path d="M3 7.5 V4.8 A3.5 3.5 0 0 1 10 4.8 V7.5" fill="none" stroke="#5e5e5e" stroke-width="1.4"/><rect x="0.8" y="7" width="11.4" height="7.5" rx="1.5" fill="#5e5e5e"/></svg><svg style="left:1025px;top:172px" width="24" height="19"><text x="0.30" y="15.60" font-family="Liberation Sans" font-size="11.3" font-weight="400" fill="#000" textLength="21.7" lengthAdjust="spacingAndGlyphs" >Item</text></svg><svg style="left:955px;top:197px" width="14" height="14" viewBox="0 0 14 14" ><rect x="0.5" y="0.5" width="13" height="13" fill="#fff" stroke="#8a8a8a"/><path d="M3 7.2 L5.6 10.5 L10.8 2.8" fill="none" stroke="#000" stroke-width="1.7"/></svg><svg style="left:991px;top:197px" width="14" height="14" viewBox="0 0 14 14" ><rect x="0.5" y="0.5" width="13" height="13" fill="#fff" stroke="#8a8a8a"/></svg><svg style="left:1028px;top:196px" width="14" height="14" viewBox="0 0 14 14" ><defs><linearGradient id="mg" x1="0" x2="1"><stop offset="0" stop-color="#cfcfcf"/><stop offset="1" stop-color="#f4f4f4"/></linearGradient></defs><rect x="0.5" y="1.5" width="12.5" height="11.5" rx="1" fill="url(#mg)" stroke="#8c8c8c"/><path d="M2.5 1.5 V13" stroke="#9a9a9a"/></svg><svg style="left:1049px;top:190px" width="35" height="21"><text x="0.60" y="16.40" font-family="Liberation Sans" font-size="12.5" font-weight="700" fill="#000" textLength="31.8" lengthAdjust="spacingAndGlyphs" >Map 1</text></svg><svg style="left:1139px;top:276px" width="17" height="1" viewBox="0 0 17 1" ><rect x="0" y="0" width="1" height="1" fill="#b0b0b0"/><rect x="3" y="0" width="1" height="1" fill="#b0b0b0"/><rect x="6" y="0" width="1" height="1" fill="#b0b0b0"/><rect x="9" y="0" width="1" height="1" fill="#b0b0b0"/><rect x="12" y="0" width="1" height="1" fill="#b0b0b0"/><rect x="15" y="0" width="1" height="1" fill="#b0b0b0"/></svg><div class="a" style="left:951px;top:303px;width:390px;height:1px;background:#b9b9b9"></div><div class="a" style="left:951px;top:282px;width:57px;height:22px;background:linear-gradient(#e9e9e9,#dedede);border:1px solid #bfbfbf;border-bottom:none;border-radius:3px 3px 0 0"></div><div class="t" style="left:959px;top:288px;font-size:12px"></div><svg style="left:962px;top:283px" width="36" height="19"><text x="0.30" y="15.50" font-family="Liberation Sans" font-size="11.3" font-weight="400" fill="#000" textLength="33.3" lengthAdjust="spacingAndGlyphs" >Layout</text></svg><div class="a" style="left:1106px;top:282px;width:56px;height:22px;background:linear-gradient(#e9e9e9,#dedede);border:1px solid #bfbfbf;border-bottom:none;border-radius:3px 3px 0 0"></div><div class="t" style="left:1114px;top:288px;font-size:12px"></div><svg style="left:1117px;top:283px" width="35" height="19"><text x="0.20" y="15.50" font-family="Liberation Sans" font-size="11.3" font-weight="400" fill="#000" textLength="32" lengthAdjust="spacingAndGlyphs" >Guides</text></svg><div class="a" style="left:1007px;top:280px;width:100px;height:24px;background:linear-gradient(#ffffff,#f2f2f2);border:1px solid #b9b9b9;border-bottom:none;border-radius:3px 3px 0 0"></div><div class="t" style="left:1015px;top:287px;font-size:12px"></div><svg style="left:1019px;top:282px" width="77" height="19"><text x="0.70" y="15.40" font-family="Liberation Sans" font-size="11.3" font-weight="400" fill="#000" textLength="73.7" lengthAdjust="spacingAndGlyphs" >Item Properties</text></svg><svg style="left:955px;top:304px" width="82" height="19"><text x="0.70" y="15.20" font-family="Liberation Sans" font-size="11.3" font-weight="400" fill="#000" textLength="79.2" lengthAdjust="spacingAndGlyphs" >Item Properties</text></svg><svg style="left:1314px;top:309px" width="26" height="12" viewBox="0 0 26 12" ><rect x="0.5" y="0.5" width="10.5" height="10.5" rx="2" fill="none" stroke="#777"/><rect x="4" y="2.5" width="4.5" height="4.5" fill="none" stroke="#666" stroke-width="0.9"/><rect x="2.5" y="4.5" width="4" height="4" fill="#f0f0f0" stroke="#666" stroke-width="0.9"/><rect x="14.5" y="0.5" width="10.5" height="10.5" rx="2" fill="none" stroke="#777"/><path d="M17 3 L22.5 8.5 M22.5 3 L17 8.5" stroke="#555" stroke-width="1.6"/></svg><div class="a" style="left:951px;top:324px;width:390px;height:17px;background:#c6c6c6"></div><svg style="left:956px;top:322px" width="36" height="20"><text x="0.60" y="15.50" font-family="Liberation Sans" font-size="11.5" font-weight="700" fill="#000" textLength="32.7" lengthAdjust="spacingAndGlyphs" >Map 1</text></svg><svg style="left:960px;top:348px" width="15" height="16" viewBox="0 0 15 16" ><g transform="scale(0.68)"><path d="M2 10 A8 8 0 0 1 16 4.5 L18.5 2 V9.5 H11 L13.5 7 A5 5 0 0 0 5 10.5 Z" fill="#3f88cf"/><path d="M19 12 A8 8 0 0 1 5 17.5 L2.5 20 V12.5 H10 L7.5 15 A5 5 0 0 0 16 11.5 Z" fill="#5aa0de"/></g></svg><div class="a" style="left:984px;top:350px;width:1px;height:12px;background:#d0d0d0"></div><div class="a" style="left:1040px;top:350px;width:1px;height:12px;background:#d0d0d0"></div><div class="a" style="left:1097px;top:350px;width:1px;height:12px;background:#d0d0d0"></div><div class="a" style="left:1154px;top:350px;width:1px;height:12px;background:#d0d0d0"></div><svg style="left:991px;top:348px" width="15" height="16" viewBox="0 0 15 16" ><rect x="0.5" y="2.5" width="13.5" height="13" fill="#e6e6e6" stroke="#8a8a8a"/><rect x="3.5" y="5.5" width="7.5" height="7" fill="#f2f2f2" stroke="#7a7a7a" stroke-width="0.9"/><path d="M1 3 L3.5 5.5 M13.5 3 L11 5.5 M1 15 L3.5 12.5 M13.5 15 L11 12.5" stroke="#8a8a8a" stroke-width="0.8"/><path d="M2 3.5 Q4.5 0 8 2.5 Q9.5 4 9.5 7.5" fill="none" stroke="#e8782c" stroke-width="2.2"/><path d="M6 7 L9.5 11 L13 7Z" fill="#e8782c"/></svg><svg style="left:1017px;top:348px" width="15" height="16" viewBox="0 0 15 16" ><rect x="0.5" y="2.5" width="13.5" height="13" fill="#e6e6e6" stroke="#8a8a8a"/><rect x="3.5" y="5.5" width="7.5" height="7" fill="#f2f2f2" stroke="#7a7a7a" stroke-width="0.9"/><path d="M1 3 L3.5 5.5 M13.5 3 L11 5.5 M1 15 L3.5 12.5 M13.5 15 L11 12.5" stroke="#8a8a8a" stroke-width="0.8"/><path d="M5 12 V7.5 Q5 3 10 3" fill="none" stroke="#e8782c" stroke-width="2.2"/><path d="M9.5 -0.5 L14.5 3 L9.5 6.5Z" fill="#e8782c"/></svg><svg style="left:1048px;top:348px" width="15" height="16" viewBox="0 0 15 16" ><rect x="0.5" y="2.5" width="13.5" height="13" fill="#e6e6e6" stroke="#8a8a8a"/><rect x="3.5" y="5.5" width="7.5" height="7" fill="#f2f2f2" stroke="#7a7a7a" stroke-width="0.9"/><path d="M1 3 L3.5 5.5 M13.5 3 L11 5.5 M1 15 L3.5 12.5 M13.5 15 L11 12.5" stroke="#8a8a8a" stroke-width="0.8"/><text x="7.5" y="14.6" font-size="4.2" font-family="Liberation Sans" text-anchor="middle" fill="#666">1:23</text><path d="M2 3.5 Q4.5 0 8 2.5 Q9.5 4 9.5 7.5" fill="none" stroke="#e8782c" stroke-width="2.2"/><path d="M6 7 L9.5 11 L13 7Z" fill="#e8782c"/></svg><svg style="left:1074px;top:348px" width="15" height="16" viewBox="0 0 15 16" ><rect x="0.5" y="2.5" width="13.5" height="13" fill="#e6e6e6" stroke="#8a8a8a"/><rect x="3.5" y="5.5" width="7.5" height="7" fill="#f2f2f2" stroke="#7a7a7a" stroke-width="0.9"/><path d="M1 3 L3.5 5.5 M13.5 3 L11 5.5 M1 15 L3.5 12.5 M13.5 15 L11 12.5" stroke="#8a8a8a" stroke-width="0.8"/><text x="7.5" y="14.6" font-size="4.2" font-family="Liberation Sans" text-anchor="middle" fill="#666">1:23</text><path d="M5 12 V7.5 Q5 3 10 3" fill="none" stroke="#e8782c" stroke-width="2.2"/><path d="M9.5 -0.5 L14.5 3 L9.5 6.5Z" fill="#e8782c"/></svg><svg style="left:1106px;top:348px" width="16" height="17" viewBox="0 0 16 17" ><path d="M1.5 2 Q1.5 0.5 3 0.5 H13.5 V13.5 H3 Q1.5 13.5 1.5 12Z" fill="#ececec" stroke="#9a9a9a"/><path d="M8.5 0 V7 L10.5 5 V0z" fill="#4f86c0"/><path d="M8.5 0 v7" stroke="#4f86c0" stroke-width="2.5"/><path d="M10 14h5l-2.5 2.5z" fill="#333"/></svg><svg style="left:1131px;top:348px" width="15" height="15" viewBox="0 0 15 15" ><path d="M1.5 2 Q1.5 0.5 3 0.5 H13.5 V13.5 H3 Q1.5 13.5 1.5 12Z" fill="#ececec" stroke="#9a9a9a"/><g fill="#4f86c0"><path d="M8 2 L5.5 5 H10.5Z"/><rect x="3.5" y="6.5" width="2" height="2"/><rect x="10.5" y="6.5" width="2" height="2"/><rect x="7" y="10" width="2" height="2"/></g></svg><svg style="left:1162px;top:351px" width="16" height="10" viewBox="0 0 16 10" ><path d="M0.5 4.5 L3.5 0.5 H14.5 V8.5 H3.5Z" fill="#f6e86a" stroke="#d2a800" stroke-width="1"/><text x="9" y="7" font-size="5.5" font-weight="bold" font-family="Liberation Sans" text-anchor="middle" fill="#555">abc</text></svg><svg style="left:1188px;top:348px" width="15" height="15" viewBox="0 0 15 15" ><circle cx="5" cy="9.5" r="5" fill="#c8d8c8" stroke="#555" stroke-width="0.8" stroke-dasharray="0.8 1.6"/><circle cx="9.5" cy="5" r="4.5" fill="#c8d8c8" stroke="#555" stroke-width="0.8" stroke-dasharray="0.8 1.6"/><path d="M5 5 H9.5 V9.5 Q5 9.5 5 5Z" fill="#6f8fa8"/></svg><div class="a" style="left:951px;top:372px;width:390px;height:481px;border:1px solid #b0b0b0;background:#f0f0f0"></div><div class="a" style="left:1326px;top:373px;width:14px;height:479px;background:#e6e6e6;border-left:1px solid #ababab"></div><div class="a" style="left:1327px;top:373px;width:13px;height:14px;background:#fafafa"></div><svg style="left:1329px;top:377px" width="9" height="6" viewBox="0 0 9 6" ><path d="M0 5 L4.5 0.5 L9 5Z" fill="#555"/></svg><div class="a" style="left:1327px;top:386px;width:13px;height:215px;background:linear-gradient(90deg,#f7f7f7,#fdfdfd);border-top:1px solid #c8c8c8;border-bottom:1px solid #c8c8c8"></div><div class="a" style="left:1327px;top:838px;width:13px;height:14px;background:#fafafa"></div><svg style="left:1329px;top:842px" width="9" height="6" viewBox="0 0 9 6" ><path d="M0 0.5 L4.5 5 L9 0.5Z" fill="#555"/></svg><svg style="left:966px;top:389px" width="11" height="7" viewBox="0 0 11 7" ><path d="M0 0.5 H10.5 L5.25 6.5Z" fill="#333"/></svg><svg style="left:984px;top:381px" width="91" height="20"><text x="0.40" y="15.20" font-family="Liberation Sans" font-size="11.5" font-weight="700" fill="#000" textLength="88.2" lengthAdjust="spacingAndGlyphs" >Main Properties</text></svg><div class="a" style="left:964px;top:402px;width:351px;height:141px;background:#ebebeb;border:1px solid #d9d9d9;border-radius:3px"></div><svg style="left:976px;top:417px" width="28" height="19"><text x="0.70" y="15.40" font-family="Liberation Sans" font-size="11.3" font-weight="400" fill="#000" textLength="24.4" lengthAdjust="spacingAndGlyphs" >Scale</text></svg><div class="a" style="left:1044px;top:416px;width:221px;height:22px;background:#fff;border:1px solid #a9a9a9;border-radius:3px"></div><svg style="left:1046px;top:417px" width="45" height="19"><text x="0.80" y="15.40" font-family="Liberation Sans" font-size="11.3" font-weight="400" fill="#000" textLength="41.4" lengthAdjust="spacingAndGlyphs" >9000000</text></svg><svg style="left:1274px;top:419px" width="23" height="17" viewBox="0 0 23 17" ><path d="M0.3 8 L6 1.8 V14.2 Z" fill="#7d7d7d"/><rect x="5.5" y="0.5" width="12.5" height="15.5" fill="#fff" stroke="#5e5e5e"/><path d="M8 4h7.5" stroke="#4a4a4a" stroke-width="1.8"/><path d="M8 11h7.5" stroke="#4a4a4a" stroke-width="1.2"/><path d="M15.5 13.2h7l-3.5 3.3z" fill="#444"/></svg><svg style="left:976px;top:449px" width="64" height="19"><text x="0.70" y="15.30" font-family="Liberation Sans" font-size="11.3" font-weight="400" fill="#000" textLength="60.8" lengthAdjust="spacingAndGlyphs" >Map rotation</text></svg><div class="a" style="left:1044px;top:449px;width:221px;height:20px;background:#fff;border:1px solid #a9a9a9;border-radius:3px"></div><svg style="left:1048px;top:449px" width="34" height="19"><text x="0.80" y="15.30" font-family="Liberation Sans" font-size="11.3" font-weight="400" fill="#000" textLength="30.4" lengthAdjust="spacingAndGlyphs" >0.00 °</text></svg><div class="a" style="left:1250px;top:450px;width:1px;height:18px;background:#c8c8c8"></div><svg style="left:1253px;top:452px" width="9" height="14" viewBox="0 0 9 14" ><path d="M0.5 4.5 L4.5 0.5 L8.5 4.5Z M0.5 8.5 L4.5 12.5 L8.5 8.5Z" fill="#555"/></svg><svg style="left:1274px;top:451px" width="23" height="17" viewBox="0 0 23 17" ><path d="M0.3 8 L6 1.8 V14.2 Z" fill="#7d7d7d"/><rect x="5.5" y="0.5" width="12.5" height="15.5" fill="#fff" stroke="#5e5e5e"/><path d="M8 4h7.5" stroke="#4a4a4a" stroke-width="1.8"/><path d="M8 11h7.5" stroke="#4a4a4a" stroke-width="1.2"/><path d="M15.5 13.2h7l-3.5 3.3z" fill="#444"/></svg><svg style="left:976px;top:481px" width="23" height="19"><text x="0.70" y="15.30" font-family="Liberation Sans" font-size="11.3" font-weight="400" fill="#000" textLength="19.7" lengthAdjust="spacingAndGlyphs" >CRS</text></svg><div class="a" style="left:1044px;top:478px;width:194px;height:26px;background:linear-gradient(#fdfdfd,#eeeeee);border:1px solid #a9a9a9;border-radius:3px"></div><div class="t" style="left:1050px;top:486px;font-size:11.5px;color:#000"></div><svg style="left:1223px;top:489px" width="8" height="5" viewBox="0 0 8 5" ><path d="M0 0h7.5l-3.75 3.8z" fill="#444"/></svg><svg style="left:1048px;top:481px" width="81" height="19"><text x="0.20" y="15.30" font-family="Liberation Sans" font-size="11.3" font-weight="400" fill="#000" textLength="78.3" lengthAdjust="spacingAndGlyphs" >Use Project CRS</text></svg><div class="a" style="left:1241px;top:479px;width:24px;height:22px;background:linear-gradient(#fbfbfb,#ececec);border:1px solid #b0b0b0;border-radius:3px"></div><svg style="left:1246px;top:483px" width="14" height="14" viewBox="0 0 14 14" ><circle cx="6" cy="6" r="5.5" fill="#cfe0f0" stroke="#9ab" stroke-width="0.8"/><path d="M0.5 6h11M6 0.5v11M2 3h8M2 9h8" stroke="#9aaab8" stroke-width="0.6"/><rect x="7" y="7" width="6.5" height="6.5" fill="#e9b82a"/><path d="M8.5 12 L12 8.5" stroke="#fff" stroke-width="1"/></svg><svg style="left:1274px;top:482.5px" width="23" height="17" viewBox="0 0 23 17" ><path d="M0.3 8 L6 1.8 V14.2 Z" fill="#7d7d7d"/><rect x="5.5" y="0.5" width="12.5" height="15.5" fill="#fff" stroke="#5e5e5e"/><path d="M8 4h7.5" stroke="#4a4a4a" stroke-width="1.8"/><path d="M8 11h7.5" stroke="#4a4a4a" stroke-width="1.2"/><path d="M15.5 13.2h7l-3.5 3.3z" fill="#444"/></svg><svg style="left:977px;top:512px" width="14" height="14" viewBox="0 0 14 14" ><rect x="0.5" y="0.5" width="13" height="13" fill="#fff" stroke="#8a8a8a"/><path d="M3 7.2 L5.6 10.5 L10.8 2.8" fill="none" stroke="#000" stroke-width="1.7"/></svg><svg style="left:995px;top:509px" width="116" height="19"><text x="0.50" y="14.90" font-family="Liberation Sans" font-size="11.3" font-weight="400" fill="#000" textLength="112.9" lengthAdjust="spacingAndGlyphs" >Draw map canvas items</text></svg><svg style="left:966px;top:555px" width="11" height="7" viewBox="0 0 11 7" ><path d="M0 0.5 H10.5 L5.25 6.5Z" fill="#333"/></svg><svg style="left:984px;top:546px" width="41" height="20"><text x="0.20" y="15.60" font-family="Liberation Sans" font-size="11.5" font-weight="700" fill="#000" textLength="37.8" lengthAdjust="spacingAndGlyphs" >Layers</text></svg><div class="a" style="left:964px;top:567px;width:351px;height:109px;background:#ebebeb;border:1px solid #d9d9d9;border-radius:3px"></div><svg style="left:977px;top:584px" width="14" height="14" viewBox="0 0 14 14" ><rect x="0.5" y="0.5" width="13" height="13" fill="#fff" stroke="#8a8a8a"/></svg><svg style="left:995px;top:581px" width="89" height="19"><text x="0.40" y="15.60" font-family="Liberation Sans" font-size="11.3" font-weight="400" fill="#000" textLength="85.8" lengthAdjust="spacingAndGlyphs" >Follow map theme</text></svg><div class="a" style="left:1124px;top:581px;width:141px;height:22px;background:linear-gradient(#fdfdfd,#eeeeee);border:1px solid #a9a9a9;border-radius:3px"></div><div class="t" style="left:1129px;top:587px;font-size:11.5px;color:#000"></div><svg style="left:1250px;top:590px" width="8" height="5" viewBox="0 0 8 5" ><path d="M0 0h7.5l-3.75 3.8z" fill="#444"/></svg><svg style="left:1129px;top:581px" width="33" height="19"><text x="0.00" y="15.60" font-family="Liberation Sans" font-size="11.3" font-weight="400" fill="#000" textLength="31" lengthAdjust="spacingAndGlyphs" >(none)</text></svg><svg style="left:1274px;top:584px" width="23" height="17" viewBox="0 0 23 17" ><path d="M0.3 8 L6 1.8 V14.2 Z" fill="#7d7d7d"/><rect x="5.5" y="0.5" width="12.5" height="15.5" fill="#fff" stroke="#5e5e5e"/><path d="M8 4h7.5" stroke="#4a4a4a" stroke-width="1.8"/><path d="M8 11h7.5" stroke="#4a4a4a" stroke-width="1.2"/><path d="M15.5 13.2h7l-3.5 3.3z" fill="#444"/></svg><svg style="left:977px;top:616px" width="14" height="14" viewBox="0 0 14 14" ><rect x="0.5" y="0.5" width="13" height="13" fill="#fff" stroke="#8a8a8a"/></svg><svg style="left:995px;top:613px" width="56" height="19"><text x="0.40" y="15.30" font-family="Liberation Sans" font-size="11.3" font-weight="400" fill="#000" textLength="53.1" lengthAdjust="spacingAndGlyphs" >Lock layers</text></svg><div class="a" style="left:1241px;top:612px;width:24px;height:23px;background:linear-gradient(#fbfbfb,#ececec);border:1px solid #b0b0b0;border-radius:3px"></div><svg style="left:1245px;top:617px" width="17" height="13" viewBox="0 0 17 13" ><path d="M0.5 6 Q7 -1 14 6 Q7 12 0.5 6Z" fill="#f2f2f2" stroke="#9a9a9a" stroke-width="0.8"/><circle cx="7" cy="5.5" r="3.3" fill="#6b93c8"/><circle cx="7" cy="5.5" r="1.3" fill="#111"/><path d="M11 9.5h5l-2.5 2.5z" fill="#444"/></svg><svg style="left:1274px;top:615.5px" width="23" height="17" viewBox="0 0 23 17" ><path d="M0.3 8 L6 1.8 V14.2 Z" fill="#7d7d7d"/><rect x="5.5" y="0.5" width="12.5" height="15.5" fill="#fff" stroke="#5e5e5e"/><path d="M8 4h7.5" stroke="#4a4a4a" stroke-width="1.8"/><path d="M8 11h7.5" stroke="#4a4a4a" stroke-width="1.2"/><path d="M15.5 13.2h7l-3.5 3.3z" fill="#444"/></svg><svg style="left:977px;top:645px" width="14" height="14" viewBox="0 0 14 14" ><rect x="0.5" y="0.5" width="13" height="13" fill="#f4f4f4" stroke="#c4c4c4"/></svg><svg style="left:995px;top:642px" width="104" height="19"><text x="0.40" y="15.40" font-family="Liberation Sans" font-size="11.3" font-weight="400" fill="#8c8c8c" textLength="100.8" lengthAdjust="spacingAndGlyphs" >Lock styles for layers</text></svg><svg style="left:966px;top:688px" width="11" height="7" viewBox="0 0 11 7" ><path d="M0 0.5 H10.5 L5.25 6.5Z" fill="#333"/></svg><svg style="left:984px;top:679px" width="45" height="20"><text x="0.50" y="15.10" font-family="Liberation Sans" font-size="11.5" font-weight="700" fill="#000" textLength="42.3" lengthAdjust="spacingAndGlyphs" >Extents</text></svg><div class="a" style="left:964px;top:700px;width:351px;height:148px;background:#ebebeb;border:1px solid #d9d9d9;border-radius:3px"></div><svg style="left:976px;top:715px" width="28" height="19"><text x="0.70" y="15.50" font-family="Liberation Sans" font-size="11.3" font-weight="400" fill="#000" textLength="24.7" lengthAdjust="spacingAndGlyphs" >X min</text></svg><div class="a" style="left:1012px;top:714px;width:253px;height:22px;background:#fff;border:1px solid #a9a9a9;border-radius:3px"></div><svg style="left:1015px;top:715px" width="60" height="19"><text x="0.40" y="15.50" font-family="Liberation Sans" font-size="11.3" font-weight="400" fill="#000" textLength="56.8" lengthAdjust="spacingAndGlyphs" >251597.856</text></svg><svg style="left:1274px;top:716.5px" width="23" height="17" viewBox="0 0 23 17" ><path d="M0.3 8 L6 1.8 V14.2 Z" fill="#7d7d7d"/><rect x="5.5" y="0.5" width="12.5" height="15.5" fill="#fff" stroke="#5e5e5e"/><path d="M8 4h7.5" stroke="#4a4a4a" stroke-width="1.8"/><path d="M8 11h7.5" stroke="#4a4a4a" stroke-width="1.2"/><path d="M15.5 13.2h7l-3.5 3.3z" fill="#444"/></svg><svg style="left:976px;top:747px" width="28" height="19"><text x="0.70" y="15.60" font-family="Liberation Sans" font-size="11.3" font-weight="400" fill="#000" textLength="24.7" lengthAdjust="spacingAndGlyphs" >Y min</text></svg><div class="a" style="left:1012px;top:746px;width:253px;height:22px;background:#fff;border:1px solid #a9a9a9;border-radius:3px"></div><svg style="left:1015px;top:747px" width="65" height="19"><text x="0.40" y="15.60" font-family="Liberation Sans" font-size="11.3" font-weight="400" fill="#000" textLength="61.7" lengthAdjust="spacingAndGlyphs" >-103865.124</text></svg><svg style="left:1274px;top:748.5px" width="23" height="17" viewBox="0 0 23 17" ><path d="M0.3 8 L6 1.8 V14.2 Z" fill="#7d7d7d"/><rect x="5.5" y="0.5" width="12.5" height="15.5" fill="#fff" stroke="#5e5e5e"/><path d="M8 4h7.5" stroke="#4a4a4a" stroke-width="1.8"/><path d="M8 11h7.5" stroke="#4a4a4a" stroke-width="1.2"/><path d="M15.5 13.2h7l-3.5 3.3z" fill="#444"/></svg><svg style="left:976px;top:779px" width="32" height="19"><text x="0.70" y="15.60" font-family="Liberation Sans" font-size="11.3" font-weight="400" fill="#000" textLength="28.3" lengthAdjust="spacingAndGlyphs" >X max</text></svg><div class="a" style="left:1012px;top:778px;width:253px;height:22px;background:#fff;border:1px solid #a9a9a9;border-radius:3px"></div><svg style="left:1015px;top:779px" width="66" height="19"><text x="0.40" y="15.60" font-family="Liberation Sans" font-size="11.3" font-weight="400" fill="#000" textLength="63.6" lengthAdjust="spacingAndGlyphs" >1898597.857</text></svg><svg style="left:1274px;top:780.5px" width="23" height="17" viewBox="0 0 23 17" ><path d="M0.3 8 L6 1.8 V14.2 Z" fill="#7d7d7d"/><rect x="5.5" y="0.5" width="12.5" height="15.5" fill="#fff" stroke="#5e5e5e"/><path d="M8 4h7.5" stroke="#4a4a4a" stroke-width="1.8"/><path d="M8 11h7.5" stroke="#4a4a4a" stroke-width="1.2"/><path d="M15.5 13.2h7l-3.5 3.3z" fill="#444"/></svg><svg style="left:976px;top:812px" width="32" height="19"><text x="0.70" y="14.70" font-family="Liberation Sans" font-size="11.3" font-weight="400" fill="#000" textLength="28.3" lengthAdjust="spacingAndGlyphs" >Y max</text></svg><div class="a" style="left:1012px;top:810px;width:253px;height:22px;background:#fff;border:1px solid #a9a9a9;border-radius:3px"></div><svg style="left:1015px;top:812px" width="65" height="19"><text x="0.40" y="14.70" font-family="Liberation Sans" font-size="11.3" font-weight="400" fill="#000" textLength="62.6" lengthAdjust="spacingAndGlyphs" >1126150.790</text></svg><svg style="left:1274px;top:812.5px" width="23" height="17" viewBox="0 0 23 17" ><path d="M0.3 8 L6 1.8 V14.2 Z" fill="#7d7d7d"/><rect x="5.5" y="0.5" width="12.5" height="15.5" fill="#fff" stroke="#5e5e5e"/><path d="M8 4h7.5" stroke="#4a4a4a" stroke-width="1.8"/><path d="M8 11h7.5" stroke="#4a4a4a" stroke-width="1.2"/><path d="M15.5 13.2h7l-3.5 3.3z" fill="#444"/></svg><div class="a" style="left:1px;top:853px;width:1340px;height:26px;background:#f0f0f0"></div><svg style="left:784px;top:857px" width="74" height="19"><text x="0.80" y="15.60" font-family="Liberation Sans" font-size="11.3" font-weight="400" fill="#000" textLength="71.2" lengthAdjust="spacingAndGlyphs" >x: 194.094 mm</text></svg><svg style="left:890px;top:857px" width="69" height="19"><text x="0.90" y="15.60" font-family="Liberation Sans" font-size="11.3" font-weight="400" fill="#000" textLength="65.5" lengthAdjust="spacingAndGlyphs" >y: 72.693 mm</text></svg><svg style="left:996px;top:857px" width="40" height="19"><text x="0.70" y="15.60" font-family="Liberation Sans" font-size="11.3" font-weight="400" fill="#000" textLength="36.8" lengthAdjust="spacingAndGlyphs" >page: 1</text></svg><div class="a" style="left:1103px;top:856px;width:108px;height:22px;background:#fff;border:1px solid #a9a9a9;border-radius:3px"></div><div class="a" style="left:1190px;top:857px;width:1px;height:20px;background:#d0d0d0"></div><svg style="left:1106px;top:858px" width="36" height="19"><text x="0.50" y="14.70" font-family="Liberation Sans" font-size="11.3" font-weight="400" fill="#000" textLength="32.7" lengthAdjust="spacingAndGlyphs" >84.4%</text></svg><svg style="left:1196px;top:865px" width="9" height="5" viewBox="0 0 9 5" ><path d="M0 0h8l-4 4z" fill="#555"/></svg><div class="a" style="left:1218px;top:863px;width:98px;height:6px;background:#e2e2e2;border:1px solid #bdbdbd;border-radius:3px"></div><div class="a" style="left:1218px;top:863px;width:10px;height:6px;background:#2d7fd0;border-radius:3px 0 0 3px"></div><div class="a" style="left:1225px;top:860px;width:13px;height:13px;background:linear-gradient(#ffffff,#ececec);border:1px solid #9a9a9a;border-radius:3px"></div><svg style="left:1326px;top:866px" width="12" height="12" viewBox="0 0 12 12" ><rect x="10" y="10" width="1.2" height="1.2" fill="#aaa"/><rect x="7" y="10" width="1.2" height="1.2" fill="#aaa"/><rect x="10" y="7" width="1.2" height="1.2" fill="#aaa"/><rect x="4" y="10" width="1.2" height="1.2" fill="#aaa"/><rect x="7" y="7" width="1.2" height="1.2" fill="#aaa"/><rect x="10" y="4" width="1.2" height="1.2" fill="#aaa"/><rect x="1" y="10" width="1.2" height="1.2" fill="#aaa"/><rect x="4" y="7" width="1.2" height="1.2" fill="#aaa"/><rect x="7" y="4" width="1.2" height="1.2" fill="#aaa"/><rect x="10" y="1" width="1.2" height="1.2" fill="#aaa"/></svg></body></html>
